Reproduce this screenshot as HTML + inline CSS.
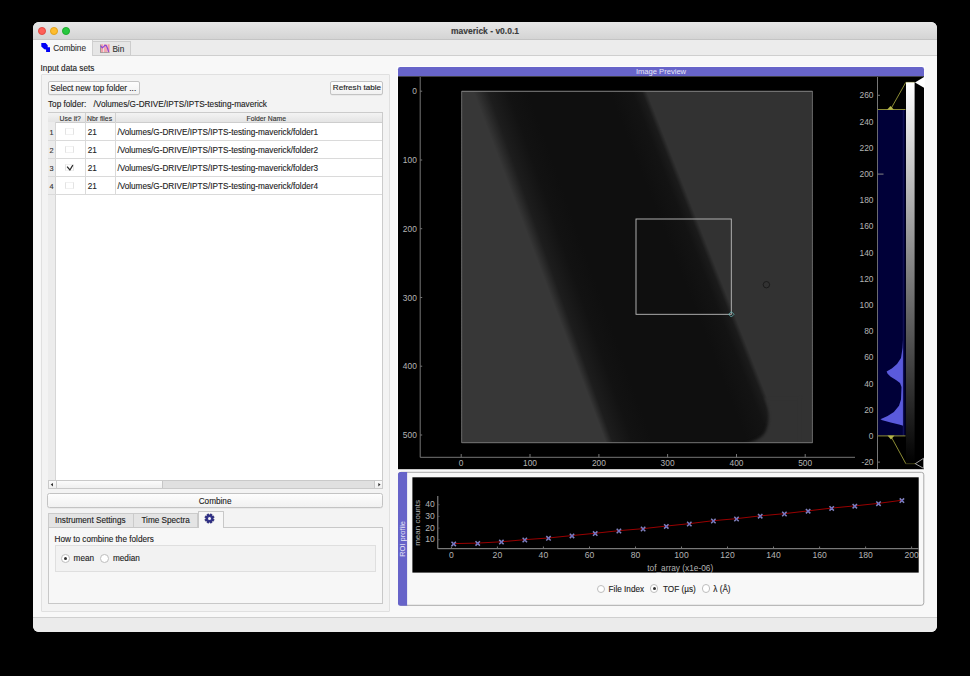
<!DOCTYPE html>
<html><head><meta charset="utf-8">
<style>
*{margin:0;padding:0;box-sizing:border-box}
html,body{width:970px;height:676px;background:#000;overflow:hidden}
body{position:relative;font-family:"Liberation Sans",sans-serif;color:#222;font-size:8.2px}
.a{position:absolute}
.t{position:absolute;white-space:nowrap;line-height:1;margin-top:1px;-webkit-text-stroke:0.12px currentColor}
#win{left:33px;top:22px;width:904px;height:610px;background:#f8f8f8;border-radius:6px;overflow:hidden}
#title{left:0;top:0;width:904px;height:18px;background:linear-gradient(#e7e7e7,#d4d4d4);border-bottom:1px solid #c4c4c4}
.tl{position:absolute;top:5.4px;width:7.8px;height:7.8px;border-radius:50%}
.btn{position:absolute;border:1px solid #c3c3c3;border-radius:2px;background:linear-gradient(#fdfdfd,#f1f1f1);box-shadow:0 0.5px 0.5px rgba(0,0,0,.08)}
.grp{position:absolute;border:1px solid #e0e0e0;background:#f3f3f3;border-radius:1px}
</style></head><body>
<div id="win" class="a">
  <div id="title" class="a"></div>
  <div class="tl" style="left:5.2px;background:#fe5f57;border:0.5px solid #e2463f"></div>
  <div class="tl" style="left:17.4px;background:#febc2e;border:0.5px solid #e1a116"></div>
  <div class="tl" style="left:29.4px;background:#28c840;border:0.5px solid #1aab29"></div>
  <div class="t" style="left:0;width:904px;text-align:center;top:4.4px;font-weight:bold;font-size:8.5px;color:#3b3b3b">maverick - v0.0.1</div>
  <!-- tab bar -->
  <div class="a" style="left:0;top:18px;width:904px;height:15.5px;background:#ececec;border-bottom:1px solid #cfcfcf"></div>
  <div class="a" style="left:0;top:18px;width:60px;height:16px;background:#f8f8f8;border-right:1px solid #d0d0d0"></div>
  <div class="a" style="left:60px;top:19px;width:37.5px;height:14.5px;background:#e6e6e6;border:1px solid #cdcdcd;border-left:0"></div>
  <!-- status bar -->
  <div class="a" style="left:0;top:595px;width:904px;height:15px;background:#ebebeb;border-top:1px solid #cfcfcf"></div>
</div>
<!-- Combine tab icon + text -->
<svg class="a" style="left:40px;top:42px" width="12" height="11" viewBox="0 0 12 11">
  <path d="M1.3 1 L5.6 1 L7.7 3.3 L7.7 5.3 L10 5.3 L10 9.9 L6.1 9.9 L6.1 7.5 L4.3 7.3 L1.3 4.5 Z" fill="#0000f5"/>
</svg>
<div class="t" style="left:53.2px;top:44.2px;color:#333">Combine</div>
<!-- Bin tab icon + text -->
<svg class="a" style="left:100px;top:43.5px" width="10.5" height="9.5" viewBox="0 0 10.5 9.5">
  <rect x="0.8" y="0.3" width="2.3" height="8.2" fill="#f2a3ad"/>
  <rect x="4" y="0.3" width="3.4" height="8.2" fill="#f2a8b0"/>
  <rect x="7.9" y="0.3" width="1.7" height="8.2" fill="#f39aa6"/>
  <path d="M0.5 0.5 V8.7 H9.6" fill="none" stroke="#6a6a6a" stroke-width="0.6"/>
  <polyline points="0.7,1.9 2.3,3.8 3.3,3.1 5.1,1.2 6.5,1.9 7.6,4.5 8.6,7.9" fill="none" stroke="#8b45d6" stroke-width="1.2" stroke-linejoin="round"/>
</svg>
<div class="t" style="left:112.4px;top:44.5px;color:#333">Bin</div>

<!-- Input data sets -->
<div class="t" style="left:40.6px;top:63.6px">Input data sets</div>
<div class="grp" style="left:41px;top:74px;width:348.5px;height:537.6px"></div>
<div class="btn" style="left:47.6px;top:80.5px;width:92px;height:14.3px"></div>
<div class="t" style="left:50.6px;top:83.5px">Select new top folder ...</div>
<div class="btn" style="left:330.4px;top:80.6px;width:52.9px;height:14px"></div>
<div class="t" style="left:332.8px;top:83.4px;font-size:8.1px">Refresh table</div>
<div class="t" style="left:48px;top:100.2px">Top folder:</div>
<div class="t" style="left:93.6px;top:100.2px">/Volumes/G-DRIVE/IPTS/IPTS-testing-maverick</div>


<!-- table -->
<div class="a" style="left:47.5px;top:112.3px;width:335.5px;height:376.7px;background:#fff;border:1px solid #cbcbcb"></div>
<div class="a" style="left:48.2px;top:112.8px;width:334.3px;height:9.8px;background:linear-gradient(#f3f3f3,#e4e4e4);border-bottom:1px solid #cdcdcd"></div>
<div class="a" style="left:48.2px;top:122.4px;width:7.4px;height:358px;background:#ececec;border-right:1px solid #d6d6d6"></div>
<div class="a" style="left:85px;top:112.8px;width:1px;height:9.6px;background:#d0d0d0"></div>
<div class="a" style="left:115.3px;top:112.8px;width:1px;height:9.6px;background:#d0d0d0"></div>
<div class="t" style="left:59.6px;top:114.2px;font-size:6.85px;color:#333;margin-top:1.6px">Use it?</div>
<div class="t" style="left:87px;top:114.2px;font-size:6.85px;color:#333;margin-top:1.6px">Nbr files</div>
<div class="t" style="left:246.5px;top:114.2px;font-size:6.85px;color:#333;margin-top:1.6px">Folder Name</div>
<div class="a" style="left:48.2px;top:139.8px;width:334.3px;height:1px;background:#dadada"></div>
<div class="a" style="left:85px;top:122.4px;width:1px;height:18px;background:#dadada"></div>
<div class="a" style="left:115.3px;top:122.4px;width:1px;height:18px;background:#dadada"></div>
<div class="t" style="left:49.4px;top:128.0px;font-size:7.3px;color:#333">1</div>
<div class="a" style="left:64.9px;top:128.2px;width:9.2px;height:6.8px;border:1px solid #e3e3e3;border-top-color:#f1f1f1;border-bottom-color:#f1f1f1"></div>
<div class="t" style="left:87.7px;top:128.3px">21</div>
<div class="t" style="left:117.4px;top:128.3px">/Volumes/G-DRIVE/IPTS/IPTS-testing-maverick/folder1</div>
<div class="a" style="left:48.2px;top:157.8px;width:334.3px;height:1px;background:#dadada"></div>
<div class="a" style="left:85px;top:140.4px;width:1px;height:18px;background:#dadada"></div>
<div class="a" style="left:115.3px;top:140.4px;width:1px;height:18px;background:#dadada"></div>
<div class="t" style="left:49.4px;top:146.0px;font-size:7.3px;color:#333">2</div>
<div class="a" style="left:64.9px;top:146.2px;width:9.2px;height:6.8px;border:1px solid #e3e3e3;border-top-color:#f1f1f1;border-bottom-color:#f1f1f1"></div>
<div class="t" style="left:87.7px;top:146.3px">21</div>
<div class="t" style="left:117.4px;top:146.3px">/Volumes/G-DRIVE/IPTS/IPTS-testing-maverick/folder2</div>
<div class="a" style="left:48.2px;top:175.8px;width:334.3px;height:1px;background:#dadada"></div>
<div class="a" style="left:85px;top:158.4px;width:1px;height:18px;background:#dadada"></div>
<div class="a" style="left:115.3px;top:158.4px;width:1px;height:18px;background:#dadada"></div>
<div class="t" style="left:49.4px;top:164.0px;font-size:7.3px;color:#333">3</div>
<div class="a" style="left:64.9px;top:164.2px;width:9.2px;height:6.8px;border:1px solid #e3e3e3;border-top-color:#f1f1f1;border-bottom-color:#f1f1f1"></div>
<svg class="a" style="left:65px;top:163.4px" width="10" height="9"><path d="M2.1 3.6 L4.9 7 L7.8 2.1" fill="none" stroke="#2a2a2a" stroke-width="1.2"/></svg>
<div class="t" style="left:87.7px;top:164.3px">21</div>
<div class="t" style="left:117.4px;top:164.3px">/Volumes/G-DRIVE/IPTS/IPTS-testing-maverick/folder3</div>
<div class="a" style="left:48.2px;top:193.8px;width:334.3px;height:1px;background:#dadada"></div>
<div class="a" style="left:85px;top:176.4px;width:1px;height:18px;background:#dadada"></div>
<div class="a" style="left:115.3px;top:176.4px;width:1px;height:18px;background:#dadada"></div>
<div class="t" style="left:49.4px;top:182.0px;font-size:7.3px;color:#333">4</div>
<div class="a" style="left:64.9px;top:182.2px;width:9.2px;height:6.8px;border:1px solid #e3e3e3;border-top-color:#f1f1f1;border-bottom-color:#f1f1f1"></div>
<div class="t" style="left:87.7px;top:182.3px">21</div>
<div class="t" style="left:117.4px;top:182.3px">/Volumes/G-DRIVE/IPTS/IPTS-testing-maverick/folder4</div>

<!-- scrollbar -->
<div class="a" style="left:47.5px;top:480.1px;width:335.5px;height:9.2px;background:#e0e0e0;border:1px solid #c9c9c9;border-radius:0 0 2px 2px"></div>
<div class="a" style="left:56.4px;top:481px;width:106.2px;height:7.4px;background:linear-gradient(#fbfbfb,#efefef);border-right:1px solid #c6c6c6"></div>
<div class="a" style="left:48.5px;top:481px;width:8px;height:7.4px;background:linear-gradient(#fbfbfb,#eeeeee);border-right:1px solid #c9c9c9"></div>
<div class="a" style="left:374.3px;top:481px;width:7.8px;height:7.4px;background:linear-gradient(#fbfbfb,#eeeeee);border-left:1px solid #c9c9c9"></div>
<svg class="a" style="left:50px;top:482px" width="5" height="6"><path d="M0.7 2.6 L3 0.9 V4.5 Z" fill="#333"/></svg>
<svg class="a" style="left:376.5px;top:482px" width="5" height="6"><path d="M3.6 2.6 L1.3 0.9 V4.5 Z" fill="#333"/></svg>
<!-- combine button -->
<div class="btn" style="left:47.3px;top:493.1px;width:335.7px;height:14.6px;border-radius:2.5px"></div>
<div class="t" style="left:47.7px;width:334.8px;text-align:center;top:496.6px">Combine</div>
<!-- tabs -->
<div class="a" style="left:48px;top:512.5px;width:85.7px;height:14.5px;background:#e4e4e4;border:1px solid #cbcbcb;border-bottom:0"></div>
<div class="t" style="left:55px;top:516px">Instrument Settings</div>
<div class="a" style="left:133.7px;top:512.5px;width:64.1px;height:14.5px;background:#e4e4e4;border:1px solid #cbcbcb;border-bottom:0;border-left:0"></div>
<div class="t" style="left:141.4px;top:516px">Time Spectra</div>
<div class="a" style="left:47.6px;top:526.8px;width:335.4px;height:77px;background:#f7f7f7;border:1px solid #c8c8c8"></div>
<div class="a" style="left:197.8px;top:511.4px;width:26px;height:16.2px;background:#f7f7f7;border:1px solid #c8c8c8;border-bottom:0;border-radius:1px 1px 0 0"></div>
<svg class="a" style="left:204.2px;top:513.4px" width="11" height="11" viewBox="-5.5 -5.5 11 11">
  <g fill="#34348f" stroke="#23235a" stroke-width="0.3"><rect x="-1.1" y="-4.8" width="2.2" height="2" rx="0.4" transform="rotate(22.5)"/><rect x="-1.1" y="-4.8" width="2.2" height="2" rx="0.4" transform="rotate(67.5)"/><rect x="-1.1" y="-4.8" width="2.2" height="2" rx="0.4" transform="rotate(112.5)"/><rect x="-1.1" y="-4.8" width="2.2" height="2" rx="0.4" transform="rotate(157.5)"/><rect x="-1.1" y="-4.8" width="2.2" height="2" rx="0.4" transform="rotate(202.5)"/><rect x="-1.1" y="-4.8" width="2.2" height="2" rx="0.4" transform="rotate(247.5)"/><rect x="-1.1" y="-4.8" width="2.2" height="2" rx="0.4" transform="rotate(292.5)"/><rect x="-1.1" y="-4.8" width="2.2" height="2" rx="0.4" transform="rotate(337.5)"/><circle r="3.5"/></g>
  <circle r="1.5" fill="#f7f7f7"/>
</svg>
<div class="t" style="left:54.6px;top:535px">How to combine the folders</div>
<div class="a" style="left:55px;top:545px;width:321.3px;height:27.4px;background:#f2f2f2;border:1px solid #dfdfdf"></div>
<div class="a" style="left:61px;top:554.3px;width:8.8px;height:8.8px;border-radius:50%;background:#fff;border:1px solid #bdbdbd"></div>
<div class="a" style="left:63.6px;top:556.9px;width:3.6px;height:3.6px;border-radius:50%;background:#333"></div>
<div class="t" style="left:73.6px;top:554.3px">mean</div>
<div class="a" style="left:100.1px;top:554.3px;width:8.8px;height:8.8px;border-radius:50%;background:#fff;border:1px solid #bdbdbd"></div>
<div class="t" style="left:113px;top:554.3px">median</div>
<!-- RIGHT -->
<svg class="a" style="left:0;top:0" width="970" height="676" viewBox="0 0 970 676" font-family="Liberation Sans, sans-serif">
<defs>
<clipPath id="imgclip"><rect x="461.3" y="90.9" width="351.5" height="352.2"/></clipPath>
<linearGradient id="cbar" x1="0" y1="0" x2="0" y2="1"><stop offset="0" stop-color="#fff"/><stop offset="1" stop-color="#000"/></linearGradient>
<linearGradient id="band" gradientUnits="userSpaceOnUse" x1="514.54" y1="284.53" x2="738.14" y2="197.33"><stop offset="0.0000" stop-color="#343434"/><stop offset="0.1000" stop-color="#343434"/><stop offset="0.1500" stop-color="#262626"/><stop offset="0.2167" stop-color="#141414"/><stop offset="0.2750" stop-color="#0f0f0f"/><stop offset="0.6875" stop-color="#0f0f0f"/><stop offset="0.7625" stop-color="#131313"/><stop offset="0.7833" stop-color="#1c1c1c"/><stop offset="0.8000" stop-color="#2a2a2a"/><stop offset="0.8167" stop-color="#303030"/><stop offset="1.0000" stop-color="#303030"/></linearGradient>
<filter id="blur1" x="-50%" y="-50%" width="200%" height="200%" color-interpolation-filters="sRGB"><feGaussianBlur stdDeviation="1.5"/></filter>
<filter id="blur2" x="-50%" y="-50%" width="200%" height="200%" color-interpolation-filters="sRGB"><feGaussianBlur stdDeviation="4"/></filter>
</defs>
<rect x="397" y="66" width="528" height="404" fill="#fdfdfd"/>
<path d="M398 69.2 Q398 67.1 400.1 67.1 H921.9 Q924 67.1 924 69.2 V76.3 H398 Z" fill="#6764c9"/>
<text x="661" y="74.2" text-anchor="middle" font-size="7.6" fill="#e6e6f7">Image Preview</text>
<rect x="398" y="76.3" width="526" height="392.9" fill="#000"/>
<g clip-path="url(#imgclip)">
<defs><linearGradient id="s0" gradientUnits="userSpaceOnUse" x1="461.3" y1="0" x2="812.8" y2="0" gradientTransform="translate(0 91.5) skewX(20.807) translate(0 -91.5)"><stop offset="0.0344" stop-color="#373737"/><stop offset="0.0770" stop-color="#1d1d1d"/><stop offset="0.1339" stop-color="#121212"/><stop offset="0.1908" stop-color="#0f0f0f"/><stop offset="0.4208" stop-color="#0f0f0f"/><stop offset="0.4862" stop-color="#131313"/><stop offset="0.5132" stop-color="#1b1b1b"/><stop offset="0.5274" stop-color="#323232"/></linearGradient><linearGradient id="s1" gradientUnits="userSpaceOnUse" x1="461.3" y1="0" x2="812.8" y2="0" gradientTransform="translate(0 94.5) skewX(20.807) translate(0 -94.5)"><stop offset="0.0376" stop-color="#373737"/><stop offset="0.0801" stop-color="#1d1d1d"/><stop offset="0.1370" stop-color="#121212"/><stop offset="0.1939" stop-color="#0f0f0f"/><stop offset="0.4241" stop-color="#0f0f0f"/><stop offset="0.4896" stop-color="#131313"/><stop offset="0.5166" stop-color="#1b1b1b"/><stop offset="0.5308" stop-color="#323232"/></linearGradient><linearGradient id="s2" gradientUnits="userSpaceOnUse" x1="461.3" y1="0" x2="812.8" y2="0" gradientTransform="translate(0 97.5) skewX(20.807) translate(0 -97.5)"><stop offset="0.0408" stop-color="#373737"/><stop offset="0.0831" stop-color="#1d1d1d"/><stop offset="0.1400" stop-color="#121212"/><stop offset="0.1969" stop-color="#0f0f0f"/><stop offset="0.4275" stop-color="#0f0f0f"/><stop offset="0.4929" stop-color="#131313"/><stop offset="0.5199" stop-color="#1b1b1b"/><stop offset="0.5342" stop-color="#323232"/></linearGradient><linearGradient id="s3" gradientUnits="userSpaceOnUse" x1="461.3" y1="0" x2="812.8" y2="0" gradientTransform="translate(0 100.5) skewX(20.807) translate(0 -100.5)"><stop offset="0.0441" stop-color="#373737"/><stop offset="0.0861" stop-color="#1d1d1d"/><stop offset="0.1430" stop-color="#121212"/><stop offset="0.1999" stop-color="#0f0f0f"/><stop offset="0.4308" stop-color="#0f0f0f"/><stop offset="0.4963" stop-color="#131313"/><stop offset="0.5233" stop-color="#1b1b1b"/><stop offset="0.5375" stop-color="#323232"/></linearGradient><linearGradient id="s4" gradientUnits="userSpaceOnUse" x1="461.3" y1="0" x2="812.8" y2="0" gradientTransform="translate(0 103.5) skewX(20.807) translate(0 -103.5)"><stop offset="0.0473" stop-color="#373737"/><stop offset="0.0891" stop-color="#1d1d1d"/><stop offset="0.1460" stop-color="#121212"/><stop offset="0.2029" stop-color="#0f0f0f"/><stop offset="0.4342" stop-color="#0f0f0f"/><stop offset="0.4996" stop-color="#131313"/><stop offset="0.5267" stop-color="#1b1b1b"/><stop offset="0.5409" stop-color="#323232"/></linearGradient><linearGradient id="s5" gradientUnits="userSpaceOnUse" x1="461.3" y1="0" x2="812.8" y2="0" gradientTransform="translate(0 106.5) skewX(20.807) translate(0 -106.5)"><stop offset="0.0505" stop-color="#373737"/><stop offset="0.0922" stop-color="#1d1d1d"/><stop offset="0.1491" stop-color="#121212"/><stop offset="0.2060" stop-color="#0f0f0f"/><stop offset="0.4376" stop-color="#0f0f0f"/><stop offset="0.5030" stop-color="#131313"/><stop offset="0.5300" stop-color="#1b1b1b"/><stop offset="0.5443" stop-color="#323232"/></linearGradient><linearGradient id="s6" gradientUnits="userSpaceOnUse" x1="461.3" y1="0" x2="812.8" y2="0" gradientTransform="translate(0 109.5) skewX(20.807) translate(0 -109.5)"><stop offset="0.0537" stop-color="#373737"/><stop offset="0.0952" stop-color="#1d1d1d"/><stop offset="0.1521" stop-color="#121212"/><stop offset="0.2090" stop-color="#0f0f0f"/><stop offset="0.4409" stop-color="#0f0f0f"/><stop offset="0.5064" stop-color="#131313"/><stop offset="0.5334" stop-color="#1b1b1b"/><stop offset="0.5476" stop-color="#323232"/></linearGradient><linearGradient id="s7" gradientUnits="userSpaceOnUse" x1="461.3" y1="0" x2="812.8" y2="0" gradientTransform="translate(0 112.5) skewX(20.807) translate(0 -112.5)"><stop offset="0.0569" stop-color="#373737"/><stop offset="0.0982" stop-color="#1d1d1d"/><stop offset="0.1551" stop-color="#121212"/><stop offset="0.2120" stop-color="#0f0f0f"/><stop offset="0.4443" stop-color="#0f0f0f"/><stop offset="0.5097" stop-color="#131313"/><stop offset="0.5368" stop-color="#1b1b1b"/><stop offset="0.5510" stop-color="#323232"/></linearGradient><linearGradient id="s8" gradientUnits="userSpaceOnUse" x1="461.3" y1="0" x2="812.8" y2="0" gradientTransform="translate(0 115.5) skewX(20.807) translate(0 -115.5)"><stop offset="0.0602" stop-color="#373737"/><stop offset="0.1012" stop-color="#1d1d1d"/><stop offset="0.1581" stop-color="#121212"/><stop offset="0.2150" stop-color="#0f0f0f"/><stop offset="0.4477" stop-color="#0f0f0f"/><stop offset="0.5131" stop-color="#131313"/><stop offset="0.5401" stop-color="#1b1b1b"/><stop offset="0.5543" stop-color="#323232"/></linearGradient><linearGradient id="s9" gradientUnits="userSpaceOnUse" x1="461.3" y1="0" x2="812.8" y2="0" gradientTransform="translate(0 118.5) skewX(20.807) translate(0 -118.5)"><stop offset="0.0634" stop-color="#373737"/><stop offset="0.1043" stop-color="#1d1d1d"/><stop offset="0.1612" stop-color="#121212"/><stop offset="0.2181" stop-color="#0f0f0f"/><stop offset="0.4510" stop-color="#0f0f0f"/><stop offset="0.5165" stop-color="#131313"/><stop offset="0.5435" stop-color="#1b1b1b"/><stop offset="0.5577" stop-color="#323232"/></linearGradient><linearGradient id="s10" gradientUnits="userSpaceOnUse" x1="461.3" y1="0" x2="812.8" y2="0" gradientTransform="translate(0 121.5) skewX(20.807) translate(0 -121.5)"><stop offset="0.0666" stop-color="#373737"/><stop offset="0.1073" stop-color="#1d1d1d"/><stop offset="0.1642" stop-color="#121212"/><stop offset="0.2211" stop-color="#0f0f0f"/><stop offset="0.4544" stop-color="#0f0f0f"/><stop offset="0.5198" stop-color="#131313"/><stop offset="0.5468" stop-color="#1b1b1b"/><stop offset="0.5611" stop-color="#323232"/></linearGradient><linearGradient id="s11" gradientUnits="userSpaceOnUse" x1="461.3" y1="0" x2="812.8" y2="0" gradientTransform="translate(0 124.5) skewX(20.807) translate(0 -124.5)"><stop offset="0.0698" stop-color="#373737"/><stop offset="0.1103" stop-color="#1d1d1d"/><stop offset="0.1672" stop-color="#121212"/><stop offset="0.2241" stop-color="#0f0f0f"/><stop offset="0.4577" stop-color="#0f0f0f"/><stop offset="0.5232" stop-color="#131313"/><stop offset="0.5502" stop-color="#1b1b1b"/><stop offset="0.5644" stop-color="#323232"/></linearGradient><linearGradient id="s12" gradientUnits="userSpaceOnUse" x1="461.3" y1="0" x2="812.8" y2="0" gradientTransform="translate(0 127.5) skewX(20.807) translate(0 -127.5)"><stop offset="0.0730" stop-color="#373737"/><stop offset="0.1134" stop-color="#1d1d1d"/><stop offset="0.1703" stop-color="#121212"/><stop offset="0.2272" stop-color="#0f0f0f"/><stop offset="0.4611" stop-color="#0f0f0f"/><stop offset="0.5265" stop-color="#131313"/><stop offset="0.5536" stop-color="#1b1b1b"/><stop offset="0.5678" stop-color="#323232"/></linearGradient><linearGradient id="s13" gradientUnits="userSpaceOnUse" x1="461.3" y1="0" x2="812.8" y2="0" gradientTransform="translate(0 130.5) skewX(20.807) translate(0 -130.5)"><stop offset="0.0763" stop-color="#373737"/><stop offset="0.1164" stop-color="#1d1d1d"/><stop offset="0.1733" stop-color="#121212"/><stop offset="0.2302" stop-color="#0f0f0f"/><stop offset="0.4645" stop-color="#0f0f0f"/><stop offset="0.5299" stop-color="#131313"/><stop offset="0.5569" stop-color="#1b1b1b"/><stop offset="0.5712" stop-color="#323232"/></linearGradient><linearGradient id="s14" gradientUnits="userSpaceOnUse" x1="461.3" y1="0" x2="812.8" y2="0" gradientTransform="translate(0 133.5) skewX(20.807) translate(0 -133.5)"><stop offset="0.0795" stop-color="#373737"/><stop offset="0.1194" stop-color="#1d1d1d"/><stop offset="0.1763" stop-color="#121212"/><stop offset="0.2332" stop-color="#0f0f0f"/><stop offset="0.4678" stop-color="#0f0f0f"/><stop offset="0.5333" stop-color="#131313"/><stop offset="0.5603" stop-color="#1b1b1b"/><stop offset="0.5745" stop-color="#323232"/></linearGradient><linearGradient id="s15" gradientUnits="userSpaceOnUse" x1="461.3" y1="0" x2="812.8" y2="0" gradientTransform="translate(0 136.5) skewX(20.807) translate(0 -136.5)"><stop offset="0.0827" stop-color="#373737"/><stop offset="0.1224" stop-color="#1d1d1d"/><stop offset="0.1793" stop-color="#121212"/><stop offset="0.2362" stop-color="#0f0f0f"/><stop offset="0.4712" stop-color="#0f0f0f"/><stop offset="0.5366" stop-color="#131313"/><stop offset="0.5637" stop-color="#1b1b1b"/><stop offset="0.5779" stop-color="#323232"/></linearGradient><linearGradient id="s16" gradientUnits="userSpaceOnUse" x1="461.3" y1="0" x2="812.8" y2="0" gradientTransform="translate(0 139.5) skewX(20.807) translate(0 -139.5)"><stop offset="0.0859" stop-color="#373737"/><stop offset="0.1255" stop-color="#1d1d1d"/><stop offset="0.1824" stop-color="#121212"/><stop offset="0.2393" stop-color="#0f0f0f"/><stop offset="0.4746" stop-color="#0f0f0f"/><stop offset="0.5400" stop-color="#131313"/><stop offset="0.5670" stop-color="#1b1b1b"/><stop offset="0.5812" stop-color="#323232"/></linearGradient><linearGradient id="s17" gradientUnits="userSpaceOnUse" x1="461.3" y1="0" x2="812.8" y2="0" gradientTransform="translate(0 142.5) skewX(20.807) translate(0 -142.5)"><stop offset="0.0891" stop-color="#373737"/><stop offset="0.1285" stop-color="#1d1d1d"/><stop offset="0.1854" stop-color="#121212"/><stop offset="0.2423" stop-color="#0f0f0f"/><stop offset="0.4779" stop-color="#0f0f0f"/><stop offset="0.5434" stop-color="#131313"/><stop offset="0.5704" stop-color="#1b1b1b"/><stop offset="0.5846" stop-color="#323232"/></linearGradient><linearGradient id="s18" gradientUnits="userSpaceOnUse" x1="461.3" y1="0" x2="812.8" y2="0" gradientTransform="translate(0 145.5) skewX(20.807) translate(0 -145.5)"><stop offset="0.0924" stop-color="#373737"/><stop offset="0.1315" stop-color="#1d1d1d"/><stop offset="0.1884" stop-color="#121212"/><stop offset="0.2453" stop-color="#0f0f0f"/><stop offset="0.4813" stop-color="#0f0f0f"/><stop offset="0.5467" stop-color="#131313"/><stop offset="0.5737" stop-color="#1b1b1b"/><stop offset="0.5880" stop-color="#323232"/></linearGradient><linearGradient id="s19" gradientUnits="userSpaceOnUse" x1="461.3" y1="0" x2="812.8" y2="0" gradientTransform="translate(0 148.5) skewX(20.807) translate(0 -148.5)"><stop offset="0.0956" stop-color="#373737"/><stop offset="0.1345" stop-color="#1d1d1d"/><stop offset="0.1914" stop-color="#121212"/><stop offset="0.2483" stop-color="#0f0f0f"/><stop offset="0.4847" stop-color="#0f0f0f"/><stop offset="0.5501" stop-color="#131313"/><stop offset="0.5771" stop-color="#1b1b1b"/><stop offset="0.5913" stop-color="#323232"/></linearGradient><linearGradient id="s20" gradientUnits="userSpaceOnUse" x1="461.3" y1="0" x2="812.8" y2="0" gradientTransform="translate(0 151.5) skewX(20.807) translate(0 -151.5)"><stop offset="0.0988" stop-color="#373737"/><stop offset="0.1376" stop-color="#1d1d1d"/><stop offset="0.1945" stop-color="#121212"/><stop offset="0.2514" stop-color="#0f0f0f"/><stop offset="0.4880" stop-color="#0f0f0f"/><stop offset="0.5534" stop-color="#131313"/><stop offset="0.5805" stop-color="#1b1b1b"/><stop offset="0.5947" stop-color="#323232"/></linearGradient><linearGradient id="s21" gradientUnits="userSpaceOnUse" x1="461.3" y1="0" x2="812.8" y2="0" gradientTransform="translate(0 154.5) skewX(20.807) translate(0 -154.5)"><stop offset="0.1020" stop-color="#373737"/><stop offset="0.1406" stop-color="#1d1d1d"/><stop offset="0.1975" stop-color="#121212"/><stop offset="0.2544" stop-color="#0f0f0f"/><stop offset="0.4914" stop-color="#0f0f0f"/><stop offset="0.5568" stop-color="#131313"/><stop offset="0.5838" stop-color="#1b1b1b"/><stop offset="0.5981" stop-color="#323232"/></linearGradient><linearGradient id="s22" gradientUnits="userSpaceOnUse" x1="461.3" y1="0" x2="812.8" y2="0" gradientTransform="translate(0 157.5) skewX(20.807) translate(0 -157.5)"><stop offset="0.1052" stop-color="#373737"/><stop offset="0.1436" stop-color="#1d1d1d"/><stop offset="0.2005" stop-color="#121212"/><stop offset="0.2574" stop-color="#0f0f0f"/><stop offset="0.4947" stop-color="#0f0f0f"/><stop offset="0.5602" stop-color="#131313"/><stop offset="0.5872" stop-color="#1b1b1b"/><stop offset="0.6014" stop-color="#323232"/></linearGradient><linearGradient id="s23" gradientUnits="userSpaceOnUse" x1="461.3" y1="0" x2="812.8" y2="0" gradientTransform="translate(0 160.5) skewX(20.807) translate(0 -160.5)"><stop offset="0.1085" stop-color="#373737"/><stop offset="0.1466" stop-color="#1d1d1d"/><stop offset="0.2035" stop-color="#121212"/><stop offset="0.2604" stop-color="#0f0f0f"/><stop offset="0.4981" stop-color="#0f0f0f"/><stop offset="0.5635" stop-color="#131313"/><stop offset="0.5906" stop-color="#1b1b1b"/><stop offset="0.6048" stop-color="#323232"/></linearGradient><linearGradient id="s24" gradientUnits="userSpaceOnUse" x1="461.3" y1="0" x2="812.8" y2="0" gradientTransform="translate(0 163.5) skewX(20.807) translate(0 -163.5)"><stop offset="0.1117" stop-color="#373737"/><stop offset="0.1497" stop-color="#1d1d1d"/><stop offset="0.2066" stop-color="#121212"/><stop offset="0.2635" stop-color="#0f0f0f"/><stop offset="0.5015" stop-color="#0f0f0f"/><stop offset="0.5669" stop-color="#131313"/><stop offset="0.5939" stop-color="#1b1b1b"/><stop offset="0.6082" stop-color="#323232"/></linearGradient><linearGradient id="s25" gradientUnits="userSpaceOnUse" x1="461.3" y1="0" x2="812.8" y2="0" gradientTransform="translate(0 166.5) skewX(20.807) translate(0 -166.5)"><stop offset="0.1149" stop-color="#373737"/><stop offset="0.1527" stop-color="#1d1d1d"/><stop offset="0.2096" stop-color="#121212"/><stop offset="0.2665" stop-color="#0f0f0f"/><stop offset="0.5048" stop-color="#0f0f0f"/><stop offset="0.5703" stop-color="#131313"/><stop offset="0.5973" stop-color="#1b1b1b"/><stop offset="0.6115" stop-color="#323232"/></linearGradient><linearGradient id="s26" gradientUnits="userSpaceOnUse" x1="461.3" y1="0" x2="812.8" y2="0" gradientTransform="translate(0 169.5) skewX(20.807) translate(0 -169.5)"><stop offset="0.1181" stop-color="#373737"/><stop offset="0.1557" stop-color="#1d1d1d"/><stop offset="0.2126" stop-color="#121212"/><stop offset="0.2695" stop-color="#0f0f0f"/><stop offset="0.5082" stop-color="#0f0f0f"/><stop offset="0.5736" stop-color="#131313"/><stop offset="0.6007" stop-color="#1b1b1b"/><stop offset="0.6149" stop-color="#323232"/></linearGradient><linearGradient id="s27" gradientUnits="userSpaceOnUse" x1="461.3" y1="0" x2="812.8" y2="0" gradientTransform="translate(0 172.5) skewX(20.807) translate(0 -172.5)"><stop offset="0.1214" stop-color="#373737"/><stop offset="0.1588" stop-color="#1d1d1d"/><stop offset="0.2157" stop-color="#121212"/><stop offset="0.2726" stop-color="#0f0f0f"/><stop offset="0.5116" stop-color="#0f0f0f"/><stop offset="0.5770" stop-color="#131313"/><stop offset="0.6040" stop-color="#1b1b1b"/><stop offset="0.6182" stop-color="#323232"/></linearGradient><linearGradient id="s28" gradientUnits="userSpaceOnUse" x1="461.3" y1="0" x2="812.8" y2="0" gradientTransform="translate(0 175.5) skewX(20.807) translate(0 -175.5)"><stop offset="0.1246" stop-color="#373737"/><stop offset="0.1618" stop-color="#1d1d1d"/><stop offset="0.2187" stop-color="#121212"/><stop offset="0.2756" stop-color="#0f0f0f"/><stop offset="0.5149" stop-color="#0f0f0f"/><stop offset="0.5803" stop-color="#131313"/><stop offset="0.6074" stop-color="#1b1b1b"/><stop offset="0.6216" stop-color="#323232"/></linearGradient><linearGradient id="s29" gradientUnits="userSpaceOnUse" x1="461.3" y1="0" x2="812.8" y2="0" gradientTransform="translate(0 178.5) skewX(20.807) translate(0 -178.5)"><stop offset="0.1278" stop-color="#373737"/><stop offset="0.1648" stop-color="#1d1d1d"/><stop offset="0.2217" stop-color="#121212"/><stop offset="0.2786" stop-color="#0f0f0f"/><stop offset="0.5183" stop-color="#0f0f0f"/><stop offset="0.5837" stop-color="#131313"/><stop offset="0.6107" stop-color="#1b1b1b"/><stop offset="0.6250" stop-color="#323232"/></linearGradient><linearGradient id="s30" gradientUnits="userSpaceOnUse" x1="461.3" y1="0" x2="812.8" y2="0" gradientTransform="translate(0 181.5) skewX(20.807) translate(0 -181.5)"><stop offset="0.1310" stop-color="#373737"/><stop offset="0.1678" stop-color="#1d1d1d"/><stop offset="0.2247" stop-color="#121212"/><stop offset="0.2816" stop-color="#0f0f0f"/><stop offset="0.5216" stop-color="#0f0f0f"/><stop offset="0.5871" stop-color="#131313"/><stop offset="0.6141" stop-color="#1b1b1b"/><stop offset="0.6283" stop-color="#323232"/></linearGradient><linearGradient id="s31" gradientUnits="userSpaceOnUse" x1="461.3" y1="0" x2="812.8" y2="0" gradientTransform="translate(0 184.5) skewX(20.807) translate(0 -184.5)"><stop offset="0.1342" stop-color="#373737"/><stop offset="0.1709" stop-color="#1d1d1d"/><stop offset="0.2278" stop-color="#121212"/><stop offset="0.2847" stop-color="#0f0f0f"/><stop offset="0.5250" stop-color="#0f0f0f"/><stop offset="0.5904" stop-color="#131313"/><stop offset="0.6175" stop-color="#1b1b1b"/><stop offset="0.6317" stop-color="#323232"/></linearGradient><linearGradient id="s32" gradientUnits="userSpaceOnUse" x1="461.3" y1="0" x2="812.8" y2="0" gradientTransform="translate(0 187.5) skewX(20.807) translate(0 -187.5)"><stop offset="0.1375" stop-color="#373737"/><stop offset="0.1739" stop-color="#1d1d1d"/><stop offset="0.2308" stop-color="#121212"/><stop offset="0.2877" stop-color="#0f0f0f"/><stop offset="0.5284" stop-color="#0f0f0f"/><stop offset="0.5938" stop-color="#131313"/><stop offset="0.6208" stop-color="#1b1b1b"/><stop offset="0.6351" stop-color="#323232"/></linearGradient><linearGradient id="s33" gradientUnits="userSpaceOnUse" x1="461.3" y1="0" x2="812.8" y2="0" gradientTransform="translate(0 190.5) skewX(20.807) translate(0 -190.5)"><stop offset="0.1407" stop-color="#373737"/><stop offset="0.1769" stop-color="#1d1d1d"/><stop offset="0.2338" stop-color="#121212"/><stop offset="0.2907" stop-color="#0f0f0f"/><stop offset="0.5317" stop-color="#0f0f0f"/><stop offset="0.5972" stop-color="#131313"/><stop offset="0.6242" stop-color="#1b1b1b"/><stop offset="0.6384" stop-color="#323232"/></linearGradient><linearGradient id="s34" gradientUnits="userSpaceOnUse" x1="461.3" y1="0" x2="812.8" y2="0" gradientTransform="translate(0 193.5) skewX(20.807) translate(0 -193.5)"><stop offset="0.1439" stop-color="#373737"/><stop offset="0.1799" stop-color="#1d1d1d"/><stop offset="0.2368" stop-color="#121212"/><stop offset="0.2937" stop-color="#0f0f0f"/><stop offset="0.5351" stop-color="#0f0f0f"/><stop offset="0.6005" stop-color="#131313"/><stop offset="0.6276" stop-color="#1b1b1b"/><stop offset="0.6418" stop-color="#323232"/></linearGradient><linearGradient id="s35" gradientUnits="userSpaceOnUse" x1="461.3" y1="0" x2="812.8" y2="0" gradientTransform="translate(0 196.5) skewX(20.807) translate(0 -196.5)"><stop offset="0.1471" stop-color="#373737"/><stop offset="0.1830" stop-color="#1d1d1d"/><stop offset="0.2399" stop-color="#121212"/><stop offset="0.2968" stop-color="#0f0f0f"/><stop offset="0.5385" stop-color="#0f0f0f"/><stop offset="0.6039" stop-color="#131313"/><stop offset="0.6309" stop-color="#1b1b1b"/><stop offset="0.6451" stop-color="#323232"/></linearGradient><linearGradient id="s36" gradientUnits="userSpaceOnUse" x1="461.3" y1="0" x2="812.8" y2="0" gradientTransform="translate(0 199.5) skewX(20.807) translate(0 -199.5)"><stop offset="0.1503" stop-color="#373737"/><stop offset="0.1860" stop-color="#1d1d1d"/><stop offset="0.2429" stop-color="#121212"/><stop offset="0.2998" stop-color="#0f0f0f"/><stop offset="0.5418" stop-color="#0f0f0f"/><stop offset="0.6073" stop-color="#131313"/><stop offset="0.6343" stop-color="#1b1b1b"/><stop offset="0.6485" stop-color="#323232"/></linearGradient><linearGradient id="s37" gradientUnits="userSpaceOnUse" x1="461.3" y1="0" x2="812.8" y2="0" gradientTransform="translate(0 202.5) skewX(20.807) translate(0 -202.5)"><stop offset="0.1536" stop-color="#373737"/><stop offset="0.1890" stop-color="#1d1d1d"/><stop offset="0.2459" stop-color="#121212"/><stop offset="0.3028" stop-color="#0f0f0f"/><stop offset="0.5452" stop-color="#0f0f0f"/><stop offset="0.6106" stop-color="#131313"/><stop offset="0.6376" stop-color="#1b1b1b"/><stop offset="0.6519" stop-color="#323232"/></linearGradient><linearGradient id="s38" gradientUnits="userSpaceOnUse" x1="461.3" y1="0" x2="812.8" y2="0" gradientTransform="translate(0 205.5) skewX(20.807) translate(0 -205.5)"><stop offset="0.1568" stop-color="#373737"/><stop offset="0.1921" stop-color="#1d1d1d"/><stop offset="0.2489" stop-color="#121212"/><stop offset="0.3058" stop-color="#0f0f0f"/><stop offset="0.5485" stop-color="#0f0f0f"/><stop offset="0.6140" stop-color="#131313"/><stop offset="0.6410" stop-color="#1b1b1b"/><stop offset="0.6552" stop-color="#323232"/></linearGradient><linearGradient id="s39" gradientUnits="userSpaceOnUse" x1="461.3" y1="0" x2="812.8" y2="0" gradientTransform="translate(0 208.5) skewX(20.807) translate(0 -208.5)"><stop offset="0.1600" stop-color="#373737"/><stop offset="0.1951" stop-color="#1d1d1d"/><stop offset="0.2520" stop-color="#121212"/><stop offset="0.3089" stop-color="#0f0f0f"/><stop offset="0.5519" stop-color="#0f0f0f"/><stop offset="0.6173" stop-color="#131313"/><stop offset="0.6444" stop-color="#1b1b1b"/><stop offset="0.6586" stop-color="#323232"/></linearGradient><linearGradient id="s40" gradientUnits="userSpaceOnUse" x1="461.3" y1="0" x2="812.8" y2="0" gradientTransform="translate(0 211.5) skewX(20.807) translate(0 -211.5)"><stop offset="0.1632" stop-color="#373737"/><stop offset="0.1981" stop-color="#1d1d1d"/><stop offset="0.2550" stop-color="#121212"/><stop offset="0.3119" stop-color="#0f0f0f"/><stop offset="0.5553" stop-color="#0f0f0f"/><stop offset="0.6207" stop-color="#131313"/><stop offset="0.6477" stop-color="#1b1b1b"/><stop offset="0.6620" stop-color="#323232"/></linearGradient><linearGradient id="s41" gradientUnits="userSpaceOnUse" x1="461.3" y1="0" x2="812.8" y2="0" gradientTransform="translate(0 214.5) skewX(20.807) translate(0 -214.5)"><stop offset="0.1664" stop-color="#373737"/><stop offset="0.2011" stop-color="#1d1d1d"/><stop offset="0.2580" stop-color="#121212"/><stop offset="0.3149" stop-color="#0f0f0f"/><stop offset="0.5586" stop-color="#0f0f0f"/><stop offset="0.6241" stop-color="#131313"/><stop offset="0.6511" stop-color="#1b1b1b"/><stop offset="0.6653" stop-color="#323232"/></linearGradient><linearGradient id="s42" gradientUnits="userSpaceOnUse" x1="461.3" y1="0" x2="812.8" y2="0" gradientTransform="translate(0 217.5) skewX(20.807) translate(0 -217.5)"><stop offset="0.1697" stop-color="#373737"/><stop offset="0.2042" stop-color="#1d1d1d"/><stop offset="0.2611" stop-color="#121212"/><stop offset="0.3180" stop-color="#0f0f0f"/><stop offset="0.5620" stop-color="#0f0f0f"/><stop offset="0.6274" stop-color="#131313"/><stop offset="0.6545" stop-color="#1b1b1b"/><stop offset="0.6687" stop-color="#323232"/></linearGradient><linearGradient id="s43" gradientUnits="userSpaceOnUse" x1="461.3" y1="0" x2="812.8" y2="0" gradientTransform="translate(0 220.5) skewX(20.807) translate(0 -220.5)"><stop offset="0.1729" stop-color="#373737"/><stop offset="0.2072" stop-color="#1d1d1d"/><stop offset="0.2641" stop-color="#121212"/><stop offset="0.3210" stop-color="#0f0f0f"/><stop offset="0.5654" stop-color="#0f0f0f"/><stop offset="0.6308" stop-color="#131313"/><stop offset="0.6578" stop-color="#1b1b1b"/><stop offset="0.6720" stop-color="#323232"/></linearGradient><linearGradient id="s44" gradientUnits="userSpaceOnUse" x1="461.3" y1="0" x2="812.8" y2="0" gradientTransform="translate(0 223.5) skewX(20.807) translate(0 -223.5)"><stop offset="0.1761" stop-color="#373737"/><stop offset="0.2102" stop-color="#1d1d1d"/><stop offset="0.2671" stop-color="#121212"/><stop offset="0.3240" stop-color="#0f0f0f"/><stop offset="0.5687" stop-color="#0f0f0f"/><stop offset="0.6342" stop-color="#131313"/><stop offset="0.6612" stop-color="#1b1b1b"/><stop offset="0.6754" stop-color="#323232"/></linearGradient><linearGradient id="s45" gradientUnits="userSpaceOnUse" x1="461.3" y1="0" x2="812.8" y2="0" gradientTransform="translate(0 226.5) skewX(20.807) translate(0 -226.5)"><stop offset="0.1793" stop-color="#373737"/><stop offset="0.2132" stop-color="#1d1d1d"/><stop offset="0.2701" stop-color="#121212"/><stop offset="0.3270" stop-color="#0f0f0f"/><stop offset="0.5721" stop-color="#0f0f0f"/><stop offset="0.6375" stop-color="#131313"/><stop offset="0.6645" stop-color="#1b1b1b"/><stop offset="0.6788" stop-color="#323232"/></linearGradient><linearGradient id="s46" gradientUnits="userSpaceOnUse" x1="461.3" y1="0" x2="812.8" y2="0" gradientTransform="translate(0 229.5) skewX(20.807) translate(0 -229.5)"><stop offset="0.1825" stop-color="#373737"/><stop offset="0.2163" stop-color="#1d1d1d"/><stop offset="0.2732" stop-color="#121212"/><stop offset="0.3301" stop-color="#0f0f0f"/><stop offset="0.5754" stop-color="#0f0f0f"/><stop offset="0.6409" stop-color="#131313"/><stop offset="0.6679" stop-color="#1b1b1b"/><stop offset="0.6821" stop-color="#323232"/></linearGradient><linearGradient id="s47" gradientUnits="userSpaceOnUse" x1="461.3" y1="0" x2="812.8" y2="0" gradientTransform="translate(0 232.5) skewX(20.807) translate(0 -232.5)"><stop offset="0.1858" stop-color="#373737"/><stop offset="0.2193" stop-color="#1d1d1d"/><stop offset="0.2762" stop-color="#121212"/><stop offset="0.3331" stop-color="#0f0f0f"/><stop offset="0.5788" stop-color="#0f0f0f"/><stop offset="0.6442" stop-color="#131313"/><stop offset="0.6713" stop-color="#1b1b1b"/><stop offset="0.6855" stop-color="#323232"/></linearGradient><linearGradient id="s48" gradientUnits="userSpaceOnUse" x1="461.3" y1="0" x2="812.8" y2="0" gradientTransform="translate(0 235.5) skewX(20.807) translate(0 -235.5)"><stop offset="0.1890" stop-color="#373737"/><stop offset="0.2223" stop-color="#1d1d1d"/><stop offset="0.2792" stop-color="#121212"/><stop offset="0.3361" stop-color="#0f0f0f"/><stop offset="0.5822" stop-color="#0f0f0f"/><stop offset="0.6476" stop-color="#131313"/><stop offset="0.6746" stop-color="#1b1b1b"/><stop offset="0.6889" stop-color="#323232"/></linearGradient><linearGradient id="s49" gradientUnits="userSpaceOnUse" x1="461.3" y1="0" x2="812.8" y2="0" gradientTransform="translate(0 238.5) skewX(20.807) translate(0 -238.5)"><stop offset="0.1922" stop-color="#373737"/><stop offset="0.2253" stop-color="#1d1d1d"/><stop offset="0.2822" stop-color="#121212"/><stop offset="0.3391" stop-color="#0f0f0f"/><stop offset="0.5855" stop-color="#0f0f0f"/><stop offset="0.6510" stop-color="#131313"/><stop offset="0.6780" stop-color="#1b1b1b"/><stop offset="0.6922" stop-color="#323232"/></linearGradient><linearGradient id="s50" gradientUnits="userSpaceOnUse" x1="461.3" y1="0" x2="812.8" y2="0" gradientTransform="translate(0 241.5) skewX(20.807) translate(0 -241.5)"><stop offset="0.1954" stop-color="#373737"/><stop offset="0.2284" stop-color="#1d1d1d"/><stop offset="0.2853" stop-color="#121212"/><stop offset="0.3422" stop-color="#0f0f0f"/><stop offset="0.5889" stop-color="#0f0f0f"/><stop offset="0.6543" stop-color="#131313"/><stop offset="0.6814" stop-color="#1b1b1b"/><stop offset="0.6956" stop-color="#323232"/></linearGradient><linearGradient id="s51" gradientUnits="userSpaceOnUse" x1="461.3" y1="0" x2="812.8" y2="0" gradientTransform="translate(0 244.5) skewX(20.807) translate(0 -244.5)"><stop offset="0.1986" stop-color="#373737"/><stop offset="0.2314" stop-color="#1d1d1d"/><stop offset="0.2883" stop-color="#121212"/><stop offset="0.3452" stop-color="#0f0f0f"/><stop offset="0.5923" stop-color="#0f0f0f"/><stop offset="0.6577" stop-color="#131313"/><stop offset="0.6847" stop-color="#1b1b1b"/><stop offset="0.6989" stop-color="#323232"/></linearGradient><linearGradient id="s52" gradientUnits="userSpaceOnUse" x1="461.3" y1="0" x2="812.8" y2="0" gradientTransform="translate(0 247.5) skewX(20.807) translate(0 -247.5)"><stop offset="0.2019" stop-color="#373737"/><stop offset="0.2344" stop-color="#1d1d1d"/><stop offset="0.2913" stop-color="#121212"/><stop offset="0.3482" stop-color="#0f0f0f"/><stop offset="0.5956" stop-color="#0f0f0f"/><stop offset="0.6611" stop-color="#131313"/><stop offset="0.6881" stop-color="#1b1b1b"/><stop offset="0.7023" stop-color="#323232"/></linearGradient><linearGradient id="s53" gradientUnits="userSpaceOnUse" x1="461.3" y1="0" x2="812.8" y2="0" gradientTransform="translate(0 250.5) skewX(20.807) translate(0 -250.5)"><stop offset="0.2051" stop-color="#373737"/><stop offset="0.2375" stop-color="#1d1d1d"/><stop offset="0.2944" stop-color="#121212"/><stop offset="0.3513" stop-color="#0f0f0f"/><stop offset="0.5990" stop-color="#0f0f0f"/><stop offset="0.6644" stop-color="#131313"/><stop offset="0.6914" stop-color="#1b1b1b"/><stop offset="0.7057" stop-color="#323232"/></linearGradient><linearGradient id="s54" gradientUnits="userSpaceOnUse" x1="461.3" y1="0" x2="812.8" y2="0" gradientTransform="translate(0 253.5) skewX(20.807) translate(0 -253.5)"><stop offset="0.2083" stop-color="#373737"/><stop offset="0.2405" stop-color="#1d1d1d"/><stop offset="0.2974" stop-color="#121212"/><stop offset="0.3543" stop-color="#0f0f0f"/><stop offset="0.6023" stop-color="#0f0f0f"/><stop offset="0.6678" stop-color="#131313"/><stop offset="0.6948" stop-color="#1b1b1b"/><stop offset="0.7090" stop-color="#323232"/></linearGradient><linearGradient id="s55" gradientUnits="userSpaceOnUse" x1="461.3" y1="0" x2="812.8" y2="0" gradientTransform="translate(0 256.5) skewX(20.807) translate(0 -256.5)"><stop offset="0.2115" stop-color="#373737"/><stop offset="0.2435" stop-color="#1d1d1d"/><stop offset="0.3004" stop-color="#121212"/><stop offset="0.3573" stop-color="#0f0f0f"/><stop offset="0.6057" stop-color="#0f0f0f"/><stop offset="0.6711" stop-color="#131313"/><stop offset="0.6982" stop-color="#1b1b1b"/><stop offset="0.7124" stop-color="#323232"/></linearGradient><linearGradient id="s56" gradientUnits="userSpaceOnUse" x1="461.3" y1="0" x2="812.8" y2="0" gradientTransform="translate(0 259.5) skewX(20.807) translate(0 -259.5)"><stop offset="0.2148" stop-color="#373737"/><stop offset="0.2465" stop-color="#1d1d1d"/><stop offset="0.3034" stop-color="#121212"/><stop offset="0.3603" stop-color="#0f0f0f"/><stop offset="0.6091" stop-color="#0f0f0f"/><stop offset="0.6745" stop-color="#131313"/><stop offset="0.7015" stop-color="#1b1b1b"/><stop offset="0.7158" stop-color="#323232"/></linearGradient><linearGradient id="s57" gradientUnits="userSpaceOnUse" x1="461.3" y1="0" x2="812.8" y2="0" gradientTransform="translate(0 262.5) skewX(20.807) translate(0 -262.5)"><stop offset="0.2180" stop-color="#373737"/><stop offset="0.2496" stop-color="#1d1d1d"/><stop offset="0.3065" stop-color="#121212"/><stop offset="0.3634" stop-color="#0f0f0f"/><stop offset="0.6124" stop-color="#0f0f0f"/><stop offset="0.6779" stop-color="#131313"/><stop offset="0.7049" stop-color="#1b1b1b"/><stop offset="0.7191" stop-color="#323232"/></linearGradient><linearGradient id="s58" gradientUnits="userSpaceOnUse" x1="461.3" y1="0" x2="812.8" y2="0" gradientTransform="translate(0 265.5) skewX(20.807) translate(0 -265.5)"><stop offset="0.2212" stop-color="#373737"/><stop offset="0.2526" stop-color="#1d1d1d"/><stop offset="0.3095" stop-color="#121212"/><stop offset="0.3664" stop-color="#0f0f0f"/><stop offset="0.6158" stop-color="#0f0f0f"/><stop offset="0.6812" stop-color="#131313"/><stop offset="0.7083" stop-color="#1b1b1b"/><stop offset="0.7225" stop-color="#323232"/></linearGradient><linearGradient id="s59" gradientUnits="userSpaceOnUse" x1="461.3" y1="0" x2="812.8" y2="0" gradientTransform="translate(0 268.5) skewX(20.807) translate(0 -268.5)"><stop offset="0.2244" stop-color="#373737"/><stop offset="0.2556" stop-color="#1d1d1d"/><stop offset="0.3125" stop-color="#121212"/><stop offset="0.3694" stop-color="#0f0f0f"/><stop offset="0.6192" stop-color="#0f0f0f"/><stop offset="0.6846" stop-color="#131313"/><stop offset="0.7116" stop-color="#1b1b1b"/><stop offset="0.7258" stop-color="#323232"/></linearGradient><linearGradient id="s60" gradientUnits="userSpaceOnUse" x1="461.3" y1="0" x2="812.8" y2="0" gradientTransform="translate(0 271.5) skewX(20.807) translate(0 -271.5)"><stop offset="0.2276" stop-color="#373737"/><stop offset="0.2586" stop-color="#1d1d1d"/><stop offset="0.3155" stop-color="#121212"/><stop offset="0.3724" stop-color="#0f0f0f"/><stop offset="0.6225" stop-color="#0f0f0f"/><stop offset="0.6880" stop-color="#131313"/><stop offset="0.7150" stop-color="#1b1b1b"/><stop offset="0.7292" stop-color="#323232"/></linearGradient><linearGradient id="s61" gradientUnits="userSpaceOnUse" x1="461.3" y1="0" x2="812.8" y2="0" gradientTransform="translate(0 274.5) skewX(20.807) translate(0 -274.5)"><stop offset="0.2309" stop-color="#373737"/><stop offset="0.2617" stop-color="#1d1d1d"/><stop offset="0.3186" stop-color="#121212"/><stop offset="0.3755" stop-color="#0f0f0f"/><stop offset="0.6259" stop-color="#0f0f0f"/><stop offset="0.6913" stop-color="#131313"/><stop offset="0.7183" stop-color="#1b1b1b"/><stop offset="0.7326" stop-color="#323232"/></linearGradient><linearGradient id="s62" gradientUnits="userSpaceOnUse" x1="461.3" y1="0" x2="812.8" y2="0" gradientTransform="translate(0 277.5) skewX(20.807) translate(0 -277.5)"><stop offset="0.2341" stop-color="#373737"/><stop offset="0.2647" stop-color="#1d1d1d"/><stop offset="0.3216" stop-color="#121212"/><stop offset="0.3785" stop-color="#0f0f0f"/><stop offset="0.6292" stop-color="#0f0f0f"/><stop offset="0.6947" stop-color="#131313"/><stop offset="0.7217" stop-color="#1b1b1b"/><stop offset="0.7359" stop-color="#323232"/></linearGradient><linearGradient id="s63" gradientUnits="userSpaceOnUse" x1="461.3" y1="0" x2="812.8" y2="0" gradientTransform="translate(0 280.5) skewX(20.807) translate(0 -280.5)"><stop offset="0.2373" stop-color="#373737"/><stop offset="0.2677" stop-color="#1d1d1d"/><stop offset="0.3246" stop-color="#121212"/><stop offset="0.3815" stop-color="#0f0f0f"/><stop offset="0.6326" stop-color="#0f0f0f"/><stop offset="0.6980" stop-color="#131313"/><stop offset="0.7251" stop-color="#1b1b1b"/><stop offset="0.7393" stop-color="#323232"/></linearGradient><linearGradient id="s64" gradientUnits="userSpaceOnUse" x1="461.3" y1="0" x2="812.8" y2="0" gradientTransform="translate(0 283.5) skewX(20.807) translate(0 -283.5)"><stop offset="0.2405" stop-color="#373737"/><stop offset="0.2707" stop-color="#1d1d1d"/><stop offset="0.3276" stop-color="#121212"/><stop offset="0.3845" stop-color="#0f0f0f"/><stop offset="0.6360" stop-color="#0f0f0f"/><stop offset="0.7014" stop-color="#131313"/><stop offset="0.7284" stop-color="#1b1b1b"/><stop offset="0.7427" stop-color="#323232"/></linearGradient><linearGradient id="s65" gradientUnits="userSpaceOnUse" x1="461.3" y1="0" x2="812.8" y2="0" gradientTransform="translate(0 286.5) skewX(20.807) translate(0 -286.5)"><stop offset="0.2437" stop-color="#373737"/><stop offset="0.2738" stop-color="#1d1d1d"/><stop offset="0.3307" stop-color="#121212"/><stop offset="0.3876" stop-color="#0f0f0f"/><stop offset="0.6393" stop-color="#0f0f0f"/><stop offset="0.7048" stop-color="#131313"/><stop offset="0.7318" stop-color="#1b1b1b"/><stop offset="0.7460" stop-color="#323232"/></linearGradient><linearGradient id="s66" gradientUnits="userSpaceOnUse" x1="461.3" y1="0" x2="812.8" y2="0" gradientTransform="translate(0 289.5) skewX(20.807) translate(0 -289.5)"><stop offset="0.2470" stop-color="#373737"/><stop offset="0.2768" stop-color="#1d1d1d"/><stop offset="0.3337" stop-color="#121212"/><stop offset="0.3906" stop-color="#0f0f0f"/><stop offset="0.6427" stop-color="#0f0f0f"/><stop offset="0.7081" stop-color="#131313"/><stop offset="0.7352" stop-color="#1b1b1b"/><stop offset="0.7494" stop-color="#323232"/></linearGradient><linearGradient id="s67" gradientUnits="userSpaceOnUse" x1="461.3" y1="0" x2="812.8" y2="0" gradientTransform="translate(0 292.5) skewX(20.807) translate(0 -292.5)"><stop offset="0.2502" stop-color="#373737"/><stop offset="0.2798" stop-color="#1d1d1d"/><stop offset="0.3367" stop-color="#121212"/><stop offset="0.3936" stop-color="#0f0f0f"/><stop offset="0.6461" stop-color="#0f0f0f"/><stop offset="0.7115" stop-color="#131313"/><stop offset="0.7385" stop-color="#1b1b1b"/><stop offset="0.7527" stop-color="#323232"/></linearGradient><linearGradient id="s68" gradientUnits="userSpaceOnUse" x1="461.3" y1="0" x2="812.8" y2="0" gradientTransform="translate(0 295.5) skewX(20.807) translate(0 -295.5)"><stop offset="0.2534" stop-color="#373737"/><stop offset="0.2829" stop-color="#1d1d1d"/><stop offset="0.3398" stop-color="#121212"/><stop offset="0.3967" stop-color="#0f0f0f"/><stop offset="0.6494" stop-color="#0f0f0f"/><stop offset="0.7149" stop-color="#131313"/><stop offset="0.7419" stop-color="#1b1b1b"/><stop offset="0.7561" stop-color="#323232"/></linearGradient><linearGradient id="s69" gradientUnits="userSpaceOnUse" x1="461.3" y1="0" x2="812.8" y2="0" gradientTransform="translate(0 298.5) skewX(20.807) translate(0 -298.5)"><stop offset="0.2566" stop-color="#373737"/><stop offset="0.2859" stop-color="#1d1d1d"/><stop offset="0.3428" stop-color="#121212"/><stop offset="0.3997" stop-color="#0f0f0f"/><stop offset="0.6528" stop-color="#0f0f0f"/><stop offset="0.7182" stop-color="#131313"/><stop offset="0.7452" stop-color="#1b1b1b"/><stop offset="0.7595" stop-color="#323232"/></linearGradient><linearGradient id="s70" gradientUnits="userSpaceOnUse" x1="461.3" y1="0" x2="812.8" y2="0" gradientTransform="translate(0 301.5) skewX(20.807) translate(0 -301.5)"><stop offset="0.2598" stop-color="#373737"/><stop offset="0.2889" stop-color="#1d1d1d"/><stop offset="0.3458" stop-color="#121212"/><stop offset="0.4027" stop-color="#0f0f0f"/><stop offset="0.6562" stop-color="#0f0f0f"/><stop offset="0.7216" stop-color="#131313"/><stop offset="0.7486" stop-color="#1b1b1b"/><stop offset="0.7628" stop-color="#323232"/></linearGradient><linearGradient id="s71" gradientUnits="userSpaceOnUse" x1="461.3" y1="0" x2="812.8" y2="0" gradientTransform="translate(0 304.5) skewX(20.807) translate(0 -304.5)"><stop offset="0.2631" stop-color="#373737"/><stop offset="0.2919" stop-color="#1d1d1d"/><stop offset="0.3488" stop-color="#121212"/><stop offset="0.4057" stop-color="#0f0f0f"/><stop offset="0.6595" stop-color="#0f0f0f"/><stop offset="0.7249" stop-color="#131313"/><stop offset="0.7520" stop-color="#1b1b1b"/><stop offset="0.7662" stop-color="#323232"/></linearGradient><linearGradient id="s72" gradientUnits="userSpaceOnUse" x1="461.3" y1="0" x2="812.8" y2="0" gradientTransform="translate(0 307.5) skewX(20.807) translate(0 -307.5)"><stop offset="0.2663" stop-color="#373737"/><stop offset="0.2950" stop-color="#1d1d1d"/><stop offset="0.3519" stop-color="#121212"/><stop offset="0.4088" stop-color="#0f0f0f"/><stop offset="0.6629" stop-color="#0f0f0f"/><stop offset="0.7283" stop-color="#131313"/><stop offset="0.7553" stop-color="#1b1b1b"/><stop offset="0.7696" stop-color="#323232"/></linearGradient><linearGradient id="s73" gradientUnits="userSpaceOnUse" x1="461.3" y1="0" x2="812.8" y2="0" gradientTransform="translate(0 310.5) skewX(20.807) translate(0 -310.5)"><stop offset="0.2695" stop-color="#373737"/><stop offset="0.2980" stop-color="#1d1d1d"/><stop offset="0.3549" stop-color="#121212"/><stop offset="0.4118" stop-color="#0f0f0f"/><stop offset="0.6662" stop-color="#0f0f0f"/><stop offset="0.7317" stop-color="#131313"/><stop offset="0.7587" stop-color="#1b1b1b"/><stop offset="0.7729" stop-color="#323232"/></linearGradient><linearGradient id="s74" gradientUnits="userSpaceOnUse" x1="461.3" y1="0" x2="812.8" y2="0" gradientTransform="translate(0 313.5) skewX(20.807) translate(0 -313.5)"><stop offset="0.2727" stop-color="#373737"/><stop offset="0.3010" stop-color="#1d1d1d"/><stop offset="0.3579" stop-color="#121212"/><stop offset="0.4148" stop-color="#0f0f0f"/><stop offset="0.6696" stop-color="#0f0f0f"/><stop offset="0.7350" stop-color="#131313"/><stop offset="0.7621" stop-color="#1b1b1b"/><stop offset="0.7763" stop-color="#323232"/></linearGradient><linearGradient id="s75" gradientUnits="userSpaceOnUse" x1="461.3" y1="0" x2="812.8" y2="0" gradientTransform="translate(0 316.5) skewX(20.807) translate(0 -316.5)"><stop offset="0.2759" stop-color="#373737"/><stop offset="0.3040" stop-color="#1d1d1d"/><stop offset="0.3609" stop-color="#121212"/><stop offset="0.4178" stop-color="#0f0f0f"/><stop offset="0.6730" stop-color="#0f0f0f"/><stop offset="0.7384" stop-color="#131313"/><stop offset="0.7654" stop-color="#1b1b1b"/><stop offset="0.7797" stop-color="#323232"/></linearGradient><linearGradient id="s76" gradientUnits="userSpaceOnUse" x1="461.3" y1="0" x2="812.8" y2="0" gradientTransform="translate(0 319.5) skewX(20.807) translate(0 -319.5)"><stop offset="0.2792" stop-color="#373737"/><stop offset="0.3071" stop-color="#1d1d1d"/><stop offset="0.3640" stop-color="#121212"/><stop offset="0.4209" stop-color="#0f0f0f"/><stop offset="0.6763" stop-color="#0f0f0f"/><stop offset="0.7418" stop-color="#131313"/><stop offset="0.7688" stop-color="#1b1b1b"/><stop offset="0.7830" stop-color="#323232"/></linearGradient><linearGradient id="s77" gradientUnits="userSpaceOnUse" x1="461.3" y1="0" x2="812.8" y2="0" gradientTransform="translate(0 322.5) skewX(20.807) translate(0 -322.5)"><stop offset="0.2824" stop-color="#373737"/><stop offset="0.3101" stop-color="#1d1d1d"/><stop offset="0.3670" stop-color="#121212"/><stop offset="0.4239" stop-color="#0f0f0f"/><stop offset="0.6797" stop-color="#0f0f0f"/><stop offset="0.7451" stop-color="#131313"/><stop offset="0.7722" stop-color="#1b1b1b"/><stop offset="0.7864" stop-color="#323232"/></linearGradient><linearGradient id="s78" gradientUnits="userSpaceOnUse" x1="461.3" y1="0" x2="812.8" y2="0" gradientTransform="translate(0 325.5) skewX(20.807) translate(0 -325.5)"><stop offset="0.2856" stop-color="#373737"/><stop offset="0.3131" stop-color="#1d1d1d"/><stop offset="0.3700" stop-color="#121212"/><stop offset="0.4269" stop-color="#0f0f0f"/><stop offset="0.6831" stop-color="#0f0f0f"/><stop offset="0.7485" stop-color="#131313"/><stop offset="0.7755" stop-color="#1b1b1b"/><stop offset="0.7897" stop-color="#323232"/></linearGradient><linearGradient id="s79" gradientUnits="userSpaceOnUse" x1="461.3" y1="0" x2="812.8" y2="0" gradientTransform="translate(0 328.5) skewX(20.807) translate(0 -328.5)"><stop offset="0.2888" stop-color="#373737"/><stop offset="0.3161" stop-color="#1d1d1d"/><stop offset="0.3730" stop-color="#121212"/><stop offset="0.4299" stop-color="#0f0f0f"/><stop offset="0.6864" stop-color="#0f0f0f"/><stop offset="0.7518" stop-color="#131313"/><stop offset="0.7789" stop-color="#1b1b1b"/><stop offset="0.7931" stop-color="#323232"/></linearGradient><linearGradient id="s80" gradientUnits="userSpaceOnUse" x1="461.3" y1="0" x2="812.8" y2="0" gradientTransform="translate(0 331.5) skewX(20.807) translate(0 -331.5)"><stop offset="0.2921" stop-color="#373737"/><stop offset="0.3192" stop-color="#1d1d1d"/><stop offset="0.3761" stop-color="#121212"/><stop offset="0.4330" stop-color="#0f0f0f"/><stop offset="0.6898" stop-color="#0f0f0f"/><stop offset="0.7552" stop-color="#131313"/><stop offset="0.7822" stop-color="#1b1b1b"/><stop offset="0.7965" stop-color="#323232"/></linearGradient><linearGradient id="s81" gradientUnits="userSpaceOnUse" x1="461.3" y1="0" x2="812.8" y2="0" gradientTransform="translate(0 334.5) skewX(20.807) translate(0 -334.5)"><stop offset="0.2953" stop-color="#373737"/><stop offset="0.3222" stop-color="#1d1d1d"/><stop offset="0.3791" stop-color="#121212"/><stop offset="0.4360" stop-color="#0f0f0f"/><stop offset="0.6931" stop-color="#0f0f0f"/><stop offset="0.7586" stop-color="#131313"/><stop offset="0.7856" stop-color="#1b1b1b"/><stop offset="0.7998" stop-color="#323232"/></linearGradient><linearGradient id="s82" gradientUnits="userSpaceOnUse" x1="461.3" y1="0" x2="812.8" y2="0" gradientTransform="translate(0 337.5) skewX(20.807) translate(0 -337.5)"><stop offset="0.2985" stop-color="#373737"/><stop offset="0.3252" stop-color="#1d1d1d"/><stop offset="0.3821" stop-color="#121212"/><stop offset="0.4390" stop-color="#0f0f0f"/><stop offset="0.6965" stop-color="#0f0f0f"/><stop offset="0.7619" stop-color="#131313"/><stop offset="0.7890" stop-color="#1b1b1b"/><stop offset="0.8032" stop-color="#323232"/></linearGradient><linearGradient id="s83" gradientUnits="userSpaceOnUse" x1="461.3" y1="0" x2="812.8" y2="0" gradientTransform="translate(0 340.5) skewX(20.807) translate(0 -340.5)"><stop offset="0.3017" stop-color="#373737"/><stop offset="0.3283" stop-color="#1d1d1d"/><stop offset="0.3852" stop-color="#121212"/><stop offset="0.4421" stop-color="#0f0f0f"/><stop offset="0.6999" stop-color="#0f0f0f"/><stop offset="0.7653" stop-color="#131313"/><stop offset="0.7923" stop-color="#1b1b1b"/><stop offset="0.8066" stop-color="#323232"/></linearGradient><linearGradient id="s84" gradientUnits="userSpaceOnUse" x1="461.3" y1="0" x2="812.8" y2="0" gradientTransform="translate(0 343.5) skewX(20.807) translate(0 -343.5)"><stop offset="0.3049" stop-color="#373737"/><stop offset="0.3313" stop-color="#1d1d1d"/><stop offset="0.3882" stop-color="#121212"/><stop offset="0.4451" stop-color="#0f0f0f"/><stop offset="0.7032" stop-color="#0f0f0f"/><stop offset="0.7687" stop-color="#131313"/><stop offset="0.7957" stop-color="#1b1b1b"/><stop offset="0.8099" stop-color="#323232"/></linearGradient><linearGradient id="s85" gradientUnits="userSpaceOnUse" x1="461.3" y1="0" x2="812.8" y2="0" gradientTransform="translate(0 346.5) skewX(20.807) translate(0 -346.5)"><stop offset="0.3082" stop-color="#373737"/><stop offset="0.3343" stop-color="#1d1d1d"/><stop offset="0.3912" stop-color="#121212"/><stop offset="0.4481" stop-color="#0f0f0f"/><stop offset="0.7066" stop-color="#0f0f0f"/><stop offset="0.7720" stop-color="#131313"/><stop offset="0.7991" stop-color="#1b1b1b"/><stop offset="0.8133" stop-color="#323232"/></linearGradient><linearGradient id="s86" gradientUnits="userSpaceOnUse" x1="461.3" y1="0" x2="812.8" y2="0" gradientTransform="translate(0 349.5) skewX(20.807) translate(0 -349.5)"><stop offset="0.3114" stop-color="#373737"/><stop offset="0.3373" stop-color="#1d1d1d"/><stop offset="0.3942" stop-color="#121212"/><stop offset="0.4511" stop-color="#0f0f0f"/><stop offset="0.7100" stop-color="#0f0f0f"/><stop offset="0.7754" stop-color="#131313"/><stop offset="0.8024" stop-color="#1b1b1b"/><stop offset="0.8166" stop-color="#323232"/></linearGradient><linearGradient id="s87" gradientUnits="userSpaceOnUse" x1="461.3" y1="0" x2="812.8" y2="0" gradientTransform="translate(0 352.5) skewX(20.807) translate(0 -352.5)"><stop offset="0.3146" stop-color="#373737"/><stop offset="0.3404" stop-color="#1d1d1d"/><stop offset="0.3973" stop-color="#121212"/><stop offset="0.4542" stop-color="#0f0f0f"/><stop offset="0.7133" stop-color="#0f0f0f"/><stop offset="0.7788" stop-color="#131313"/><stop offset="0.8058" stop-color="#1b1b1b"/><stop offset="0.8200" stop-color="#323232"/></linearGradient><linearGradient id="s88" gradientUnits="userSpaceOnUse" x1="461.3" y1="0" x2="812.8" y2="0" gradientTransform="translate(0 355.5) skewX(20.807) translate(0 -355.5)"><stop offset="0.3178" stop-color="#373737"/><stop offset="0.3434" stop-color="#1d1d1d"/><stop offset="0.4003" stop-color="#121212"/><stop offset="0.4572" stop-color="#0f0f0f"/><stop offset="0.7167" stop-color="#0f0f0f"/><stop offset="0.7821" stop-color="#131313"/><stop offset="0.8091" stop-color="#1b1b1b"/><stop offset="0.8234" stop-color="#323232"/></linearGradient><linearGradient id="s89" gradientUnits="userSpaceOnUse" x1="461.3" y1="0" x2="812.8" y2="0" gradientTransform="translate(0 358.5) skewX(20.807) translate(0 -358.5)"><stop offset="0.3210" stop-color="#373737"/><stop offset="0.3464" stop-color="#1d1d1d"/><stop offset="0.4033" stop-color="#121212"/><stop offset="0.4602" stop-color="#0f0f0f"/><stop offset="0.7200" stop-color="#0f0f0f"/><stop offset="0.7855" stop-color="#131313"/><stop offset="0.8125" stop-color="#1b1b1b"/><stop offset="0.8267" stop-color="#323232"/></linearGradient><linearGradient id="s90" gradientUnits="userSpaceOnUse" x1="461.3" y1="0" x2="812.8" y2="0" gradientTransform="translate(0 361.5) skewX(20.807) translate(0 -361.5)"><stop offset="0.3243" stop-color="#373737"/><stop offset="0.3494" stop-color="#1d1d1d"/><stop offset="0.4063" stop-color="#121212"/><stop offset="0.4632" stop-color="#0f0f0f"/><stop offset="0.7234" stop-color="#0f0f0f"/><stop offset="0.7888" stop-color="#131313"/><stop offset="0.8159" stop-color="#1b1b1b"/><stop offset="0.8301" stop-color="#323232"/></linearGradient><linearGradient id="s91" gradientUnits="userSpaceOnUse" x1="461.3" y1="0" x2="812.8" y2="0" gradientTransform="translate(0 364.5) skewX(20.807) translate(0 -364.5)"><stop offset="0.3275" stop-color="#373737"/><stop offset="0.3525" stop-color="#1d1d1d"/><stop offset="0.4094" stop-color="#121212"/><stop offset="0.4663" stop-color="#0f0f0f"/><stop offset="0.7268" stop-color="#0f0f0f"/><stop offset="0.7922" stop-color="#131313"/><stop offset="0.8192" stop-color="#1b1b1b"/><stop offset="0.8335" stop-color="#323232"/></linearGradient><linearGradient id="s92" gradientUnits="userSpaceOnUse" x1="461.3" y1="0" x2="812.8" y2="0" gradientTransform="translate(0 367.5) skewX(20.807) translate(0 -367.5)"><stop offset="0.3307" stop-color="#373737"/><stop offset="0.3555" stop-color="#1d1d1d"/><stop offset="0.4124" stop-color="#121212"/><stop offset="0.4693" stop-color="#0f0f0f"/><stop offset="0.7301" stop-color="#0f0f0f"/><stop offset="0.7956" stop-color="#131313"/><stop offset="0.8226" stop-color="#1b1b1b"/><stop offset="0.8368" stop-color="#323232"/></linearGradient><linearGradient id="s93" gradientUnits="userSpaceOnUse" x1="461.3" y1="0" x2="812.8" y2="0" gradientTransform="translate(0 370.5) skewX(20.807) translate(0 -370.5)"><stop offset="0.3339" stop-color="#373737"/><stop offset="0.3585" stop-color="#1d1d1d"/><stop offset="0.4154" stop-color="#121212"/><stop offset="0.4723" stop-color="#0f0f0f"/><stop offset="0.7335" stop-color="#0f0f0f"/><stop offset="0.7989" stop-color="#131313"/><stop offset="0.8260" stop-color="#1b1b1b"/><stop offset="0.8402" stop-color="#323232"/></linearGradient><linearGradient id="s94" gradientUnits="userSpaceOnUse" x1="461.3" y1="0" x2="812.8" y2="0" gradientTransform="translate(0 373.5) skewX(20.807) translate(0 -373.5)"><stop offset="0.3371" stop-color="#373737"/><stop offset="0.3615" stop-color="#1d1d1d"/><stop offset="0.4184" stop-color="#121212"/><stop offset="0.4753" stop-color="#0f0f0f"/><stop offset="0.7369" stop-color="#0f0f0f"/><stop offset="0.8023" stop-color="#131313"/><stop offset="0.8293" stop-color="#1b1b1b"/><stop offset="0.8435" stop-color="#323232"/></linearGradient><linearGradient id="s95" gradientUnits="userSpaceOnUse" x1="461.3" y1="0" x2="812.8" y2="0" gradientTransform="translate(0 376.5) skewX(20.807) translate(0 -376.5)"><stop offset="0.3404" stop-color="#373737"/><stop offset="0.3646" stop-color="#1d1d1d"/><stop offset="0.4215" stop-color="#121212"/><stop offset="0.4784" stop-color="#0f0f0f"/><stop offset="0.7402" stop-color="#0f0f0f"/><stop offset="0.8057" stop-color="#131313"/><stop offset="0.8327" stop-color="#1b1b1b"/><stop offset="0.8469" stop-color="#323232"/></linearGradient><linearGradient id="s96" gradientUnits="userSpaceOnUse" x1="461.3" y1="0" x2="812.8" y2="0" gradientTransform="translate(0 379.5) skewX(20.807) translate(0 -379.5)"><stop offset="0.3436" stop-color="#373737"/><stop offset="0.3676" stop-color="#1d1d1d"/><stop offset="0.4245" stop-color="#121212"/><stop offset="0.4814" stop-color="#0f0f0f"/><stop offset="0.7436" stop-color="#0f0f0f"/><stop offset="0.8090" stop-color="#131313"/><stop offset="0.8360" stop-color="#1b1b1b"/><stop offset="0.8503" stop-color="#323232"/></linearGradient><linearGradient id="s97" gradientUnits="userSpaceOnUse" x1="461.3" y1="0" x2="812.8" y2="0" gradientTransform="translate(0 382.5) skewX(20.807) translate(0 -382.5)"><stop offset="0.3468" stop-color="#373737"/><stop offset="0.3706" stop-color="#1d1d1d"/><stop offset="0.4275" stop-color="#121212"/><stop offset="0.4844" stop-color="#0f0f0f"/><stop offset="0.7469" stop-color="#0f0f0f"/><stop offset="0.8124" stop-color="#131313"/><stop offset="0.8394" stop-color="#1b1b1b"/><stop offset="0.8536" stop-color="#323232"/></linearGradient><linearGradient id="s98" gradientUnits="userSpaceOnUse" x1="461.3" y1="0" x2="812.8" y2="0" gradientTransform="translate(0 385.5) skewX(20.807) translate(0 -385.5)"><stop offset="0.3500" stop-color="#373737"/><stop offset="0.3737" stop-color="#1d1d1d"/><stop offset="0.4306" stop-color="#121212"/><stop offset="0.4875" stop-color="#0f0f0f"/><stop offset="0.7503" stop-color="#0f0f0f"/><stop offset="0.8157" stop-color="#131313"/><stop offset="0.8428" stop-color="#1b1b1b"/><stop offset="0.8570" stop-color="#323232"/></linearGradient><linearGradient id="s99" gradientUnits="userSpaceOnUse" x1="461.3" y1="0" x2="812.8" y2="0" gradientTransform="translate(0 388.5) skewX(20.807) translate(0 -388.5)"><stop offset="0.3532" stop-color="#373737"/><stop offset="0.3767" stop-color="#1d1d1d"/><stop offset="0.4336" stop-color="#121212"/><stop offset="0.4905" stop-color="#0f0f0f"/><stop offset="0.7537" stop-color="#0f0f0f"/><stop offset="0.8191" stop-color="#131313"/><stop offset="0.8461" stop-color="#1b1b1b"/><stop offset="0.8604" stop-color="#323232"/></linearGradient><linearGradient id="s100" gradientUnits="userSpaceOnUse" x1="461.3" y1="0" x2="812.8" y2="0" gradientTransform="translate(0 391.5) skewX(20.807) translate(0 -391.5)"><stop offset="0.3565" stop-color="#373737"/><stop offset="0.3797" stop-color="#1d1d1d"/><stop offset="0.4366" stop-color="#121212"/><stop offset="0.4935" stop-color="#0f0f0f"/><stop offset="0.7570" stop-color="#0f0f0f"/><stop offset="0.8225" stop-color="#131313"/><stop offset="0.8495" stop-color="#1b1b1b"/><stop offset="0.8637" stop-color="#323232"/></linearGradient><linearGradient id="s101" gradientUnits="userSpaceOnUse" x1="461.3" y1="0" x2="812.8" y2="0" gradientTransform="translate(0 394.5) skewX(20.807) translate(0 -394.5)"><stop offset="0.3597" stop-color="#373737"/><stop offset="0.3827" stop-color="#1d1d1d"/><stop offset="0.4396" stop-color="#121212"/><stop offset="0.4965" stop-color="#0f0f0f"/><stop offset="0.7604" stop-color="#0f0f0f"/><stop offset="0.8258" stop-color="#131313"/><stop offset="0.8529" stop-color="#1b1b1b"/><stop offset="0.8671" stop-color="#323232"/></linearGradient><linearGradient id="s102" gradientUnits="userSpaceOnUse" x1="461.3" y1="0" x2="812.8" y2="0" gradientTransform="translate(0 397.5) skewX(20.807) translate(0 -397.5)"><stop offset="0.3629" stop-color="#373737"/><stop offset="0.3858" stop-color="#1d1d1d"/><stop offset="0.4427" stop-color="#121212"/><stop offset="0.4996" stop-color="#0f0f0f"/><stop offset="0.7638" stop-color="#0f0f0f"/><stop offset="0.8292" stop-color="#131313"/><stop offset="0.8562" stop-color="#1b1b1b"/><stop offset="0.8704" stop-color="#323232"/></linearGradient><linearGradient id="s103" gradientUnits="userSpaceOnUse" x1="461.3" y1="0" x2="812.8" y2="0" gradientTransform="translate(0 400.5) skewX(20.807) translate(0 -400.5)"><stop offset="0.3661" stop-color="#373737"/><stop offset="0.3888" stop-color="#1d1d1d"/><stop offset="0.4457" stop-color="#121212"/><stop offset="0.5026" stop-color="#0f0f0f"/><stop offset="0.7671" stop-color="#0f0f0f"/><stop offset="0.8326" stop-color="#131313"/><stop offset="0.8596" stop-color="#1b1b1b"/><stop offset="0.8738" stop-color="#323232"/></linearGradient><linearGradient id="s104" gradientUnits="userSpaceOnUse" x1="461.3" y1="0" x2="812.8" y2="0" gradientTransform="translate(0 403.5) skewX(20.807) translate(0 -403.5)"><stop offset="0.3693" stop-color="#373737"/><stop offset="0.3918" stop-color="#1d1d1d"/><stop offset="0.4487" stop-color="#121212"/><stop offset="0.5056" stop-color="#0f0f0f"/><stop offset="0.7705" stop-color="#0f0f0f"/><stop offset="0.8359" stop-color="#131313"/><stop offset="0.8629" stop-color="#1b1b1b"/><stop offset="0.8772" stop-color="#323232"/></linearGradient><linearGradient id="s105" gradientUnits="userSpaceOnUse" x1="461.3" y1="0" x2="812.8" y2="0" gradientTransform="translate(0 406.5) skewX(20.807) translate(0 -406.5)"><stop offset="0.3726" stop-color="#373737"/><stop offset="0.3948" stop-color="#1d1d1d"/><stop offset="0.4517" stop-color="#121212"/><stop offset="0.5086" stop-color="#0f0f0f"/><stop offset="0.7738" stop-color="#0f0f0f"/><stop offset="0.8393" stop-color="#131313"/><stop offset="0.8663" stop-color="#1b1b1b"/><stop offset="0.8805" stop-color="#323232"/></linearGradient><linearGradient id="s106" gradientUnits="userSpaceOnUse" x1="461.3" y1="0" x2="812.8" y2="0" gradientTransform="translate(0 409.5) skewX(20.807) translate(0 -409.5)"><stop offset="0.3758" stop-color="#373737"/><stop offset="0.3979" stop-color="#1d1d1d"/><stop offset="0.4548" stop-color="#121212"/><stop offset="0.5117" stop-color="#0f0f0f"/><stop offset="0.7772" stop-color="#0f0f0f"/><stop offset="0.8426" stop-color="#131313"/><stop offset="0.8697" stop-color="#1b1b1b"/><stop offset="0.8839" stop-color="#323232"/></linearGradient><linearGradient id="s107" gradientUnits="userSpaceOnUse" x1="461.3" y1="0" x2="812.8" y2="0" gradientTransform="translate(0 412.5) skewX(20.807) translate(0 -412.5)"><stop offset="0.3790" stop-color="#373737"/><stop offset="0.4009" stop-color="#1d1d1d"/><stop offset="0.4578" stop-color="#121212"/><stop offset="0.5147" stop-color="#0f0f0f"/><stop offset="0.7806" stop-color="#0f0f0f"/><stop offset="0.8460" stop-color="#131313"/><stop offset="0.8730" stop-color="#1b1b1b"/><stop offset="0.8873" stop-color="#323232"/></linearGradient><linearGradient id="s108" gradientUnits="userSpaceOnUse" x1="461.3" y1="0" x2="812.8" y2="0" gradientTransform="translate(0 415.5) skewX(20.807) translate(0 -415.5)"><stop offset="0.3822" stop-color="#373737"/><stop offset="0.4039" stop-color="#1d1d1d"/><stop offset="0.4608" stop-color="#121212"/><stop offset="0.5177" stop-color="#0f0f0f"/><stop offset="0.7839" stop-color="#0f0f0f"/><stop offset="0.8494" stop-color="#131313"/><stop offset="0.8764" stop-color="#1b1b1b"/><stop offset="0.8906" stop-color="#323232"/></linearGradient><linearGradient id="s109" gradientUnits="userSpaceOnUse" x1="461.3" y1="0" x2="812.8" y2="0" gradientTransform="translate(0 418.5) skewX(20.807) translate(0 -418.5)"><stop offset="0.3855" stop-color="#373737"/><stop offset="0.4070" stop-color="#1d1d1d"/><stop offset="0.4639" stop-color="#121212"/><stop offset="0.5207" stop-color="#0f0f0f"/><stop offset="0.7873" stop-color="#0f0f0f"/><stop offset="0.8527" stop-color="#131313"/><stop offset="0.8798" stop-color="#1b1b1b"/><stop offset="0.8940" stop-color="#323232"/></linearGradient><linearGradient id="s110" gradientUnits="userSpaceOnUse" x1="461.3" y1="0" x2="812.8" y2="0" gradientTransform="translate(0 421.5) skewX(20.807) translate(0 -421.5)"><stop offset="0.3887" stop-color="#373737"/><stop offset="0.4100" stop-color="#1d1d1d"/><stop offset="0.4669" stop-color="#121212"/><stop offset="0.5238" stop-color="#0f0f0f"/><stop offset="0.7907" stop-color="#0f0f0f"/><stop offset="0.8561" stop-color="#131313"/><stop offset="0.8831" stop-color="#1b1b1b"/><stop offset="0.8973" stop-color="#323232"/></linearGradient><linearGradient id="s111" gradientUnits="userSpaceOnUse" x1="461.3" y1="0" x2="812.8" y2="0" gradientTransform="translate(0 424.5) skewX(20.807) translate(0 -424.5)"><stop offset="0.3919" stop-color="#373737"/><stop offset="0.4130" stop-color="#1d1d1d"/><stop offset="0.4699" stop-color="#121212"/><stop offset="0.5268" stop-color="#0f0f0f"/><stop offset="0.7940" stop-color="#0f0f0f"/><stop offset="0.8595" stop-color="#131313"/><stop offset="0.8865" stop-color="#1b1b1b"/><stop offset="0.9007" stop-color="#323232"/></linearGradient><linearGradient id="s112" gradientUnits="userSpaceOnUse" x1="461.3" y1="0" x2="812.8" y2="0" gradientTransform="translate(0 427.5) skewX(20.807) translate(0 -427.5)"><stop offset="0.3951" stop-color="#373737"/><stop offset="0.4160" stop-color="#1d1d1d"/><stop offset="0.4729" stop-color="#121212"/><stop offset="0.5298" stop-color="#0f0f0f"/><stop offset="0.7974" stop-color="#0f0f0f"/><stop offset="0.8628" stop-color="#131313"/><stop offset="0.8898" stop-color="#1b1b1b"/><stop offset="0.9041" stop-color="#323232"/></linearGradient><linearGradient id="s113" gradientUnits="userSpaceOnUse" x1="461.3" y1="0" x2="812.8" y2="0" gradientTransform="translate(0 430.5) skewX(20.807) translate(0 -430.5)"><stop offset="0.3983" stop-color="#373737"/><stop offset="0.4191" stop-color="#1d1d1d"/><stop offset="0.4760" stop-color="#121212"/><stop offset="0.5329" stop-color="#0f0f0f"/><stop offset="0.8007" stop-color="#0f0f0f"/><stop offset="0.8662" stop-color="#131313"/><stop offset="0.8932" stop-color="#1b1b1b"/><stop offset="0.9074" stop-color="#323232"/></linearGradient><linearGradient id="s114" gradientUnits="userSpaceOnUse" x1="461.3" y1="0" x2="812.8" y2="0" gradientTransform="translate(0 433.5) skewX(20.807) translate(0 -433.5)"><stop offset="0.4016" stop-color="#373737"/><stop offset="0.4221" stop-color="#1d1d1d"/><stop offset="0.4790" stop-color="#121212"/><stop offset="0.5359" stop-color="#0f0f0f"/><stop offset="0.8041" stop-color="#0f0f0f"/><stop offset="0.8695" stop-color="#131313"/><stop offset="0.8966" stop-color="#1b1b1b"/><stop offset="0.9108" stop-color="#323232"/></linearGradient><linearGradient id="s115" gradientUnits="userSpaceOnUse" x1="461.3" y1="0" x2="812.8" y2="0" gradientTransform="translate(0 436.5) skewX(20.807) translate(0 -436.5)"><stop offset="0.4048" stop-color="#373737"/><stop offset="0.4251" stop-color="#1d1d1d"/><stop offset="0.4820" stop-color="#121212"/><stop offset="0.5389" stop-color="#0f0f0f"/><stop offset="0.8075" stop-color="#0f0f0f"/><stop offset="0.8729" stop-color="#131313"/><stop offset="0.8999" stop-color="#1b1b1b"/><stop offset="0.9142" stop-color="#323232"/></linearGradient><linearGradient id="s116" gradientUnits="userSpaceOnUse" x1="461.3" y1="0" x2="812.8" y2="0" gradientTransform="translate(0 439.5) skewX(20.807) translate(0 -439.5)"><stop offset="0.4080" stop-color="#373737"/><stop offset="0.4281" stop-color="#1d1d1d"/><stop offset="0.4850" stop-color="#121212"/><stop offset="0.5419" stop-color="#0f0f0f"/><stop offset="0.8108" stop-color="#0f0f0f"/><stop offset="0.8763" stop-color="#131313"/><stop offset="0.9033" stop-color="#1b1b1b"/><stop offset="0.9175" stop-color="#323232"/></linearGradient><linearGradient id="s117" gradientUnits="userSpaceOnUse" x1="461.3" y1="0" x2="812.8" y2="0" gradientTransform="translate(0 442.5) skewX(20.807) translate(0 -442.5)"><stop offset="0.4112" stop-color="#373737"/><stop offset="0.4312" stop-color="#1d1d1d"/><stop offset="0.4881" stop-color="#121212"/><stop offset="0.5450" stop-color="#0f0f0f"/><stop offset="0.8142" stop-color="#0f0f0f"/><stop offset="0.8796" stop-color="#131313"/><stop offset="0.9067" stop-color="#1b1b1b"/><stop offset="0.9209" stop-color="#323232"/></linearGradient></defs>
<rect x="455" y="90" width="365" height="3.6" fill="url(#s0)"/>
<rect x="455" y="93" width="365" height="3.6" fill="url(#s1)"/>
<rect x="455" y="96" width="365" height="3.6" fill="url(#s2)"/>
<rect x="455" y="99" width="365" height="3.6" fill="url(#s3)"/>
<rect x="455" y="102" width="365" height="3.6" fill="url(#s4)"/>
<rect x="455" y="105" width="365" height="3.6" fill="url(#s5)"/>
<rect x="455" y="108" width="365" height="3.6" fill="url(#s6)"/>
<rect x="455" y="111" width="365" height="3.6" fill="url(#s7)"/>
<rect x="455" y="114" width="365" height="3.6" fill="url(#s8)"/>
<rect x="455" y="117" width="365" height="3.6" fill="url(#s9)"/>
<rect x="455" y="120" width="365" height="3.6" fill="url(#s10)"/>
<rect x="455" y="123" width="365" height="3.6" fill="url(#s11)"/>
<rect x="455" y="126" width="365" height="3.6" fill="url(#s12)"/>
<rect x="455" y="129" width="365" height="3.6" fill="url(#s13)"/>
<rect x="455" y="132" width="365" height="3.6" fill="url(#s14)"/>
<rect x="455" y="135" width="365" height="3.6" fill="url(#s15)"/>
<rect x="455" y="138" width="365" height="3.6" fill="url(#s16)"/>
<rect x="455" y="141" width="365" height="3.6" fill="url(#s17)"/>
<rect x="455" y="144" width="365" height="3.6" fill="url(#s18)"/>
<rect x="455" y="147" width="365" height="3.6" fill="url(#s19)"/>
<rect x="455" y="150" width="365" height="3.6" fill="url(#s20)"/>
<rect x="455" y="153" width="365" height="3.6" fill="url(#s21)"/>
<rect x="455" y="156" width="365" height="3.6" fill="url(#s22)"/>
<rect x="455" y="159" width="365" height="3.6" fill="url(#s23)"/>
<rect x="455" y="162" width="365" height="3.6" fill="url(#s24)"/>
<rect x="455" y="165" width="365" height="3.6" fill="url(#s25)"/>
<rect x="455" y="168" width="365" height="3.6" fill="url(#s26)"/>
<rect x="455" y="171" width="365" height="3.6" fill="url(#s27)"/>
<rect x="455" y="174" width="365" height="3.6" fill="url(#s28)"/>
<rect x="455" y="177" width="365" height="3.6" fill="url(#s29)"/>
<rect x="455" y="180" width="365" height="3.6" fill="url(#s30)"/>
<rect x="455" y="183" width="365" height="3.6" fill="url(#s31)"/>
<rect x="455" y="186" width="365" height="3.6" fill="url(#s32)"/>
<rect x="455" y="189" width="365" height="3.6" fill="url(#s33)"/>
<rect x="455" y="192" width="365" height="3.6" fill="url(#s34)"/>
<rect x="455" y="195" width="365" height="3.6" fill="url(#s35)"/>
<rect x="455" y="198" width="365" height="3.6" fill="url(#s36)"/>
<rect x="455" y="201" width="365" height="3.6" fill="url(#s37)"/>
<rect x="455" y="204" width="365" height="3.6" fill="url(#s38)"/>
<rect x="455" y="207" width="365" height="3.6" fill="url(#s39)"/>
<rect x="455" y="210" width="365" height="3.6" fill="url(#s40)"/>
<rect x="455" y="213" width="365" height="3.6" fill="url(#s41)"/>
<rect x="455" y="216" width="365" height="3.6" fill="url(#s42)"/>
<rect x="455" y="219" width="365" height="3.6" fill="url(#s43)"/>
<rect x="455" y="222" width="365" height="3.6" fill="url(#s44)"/>
<rect x="455" y="225" width="365" height="3.6" fill="url(#s45)"/>
<rect x="455" y="228" width="365" height="3.6" fill="url(#s46)"/>
<rect x="455" y="231" width="365" height="3.6" fill="url(#s47)"/>
<rect x="455" y="234" width="365" height="3.6" fill="url(#s48)"/>
<rect x="455" y="237" width="365" height="3.6" fill="url(#s49)"/>
<rect x="455" y="240" width="365" height="3.6" fill="url(#s50)"/>
<rect x="455" y="243" width="365" height="3.6" fill="url(#s51)"/>
<rect x="455" y="246" width="365" height="3.6" fill="url(#s52)"/>
<rect x="455" y="249" width="365" height="3.6" fill="url(#s53)"/>
<rect x="455" y="252" width="365" height="3.6" fill="url(#s54)"/>
<rect x="455" y="255" width="365" height="3.6" fill="url(#s55)"/>
<rect x="455" y="258" width="365" height="3.6" fill="url(#s56)"/>
<rect x="455" y="261" width="365" height="3.6" fill="url(#s57)"/>
<rect x="455" y="264" width="365" height="3.6" fill="url(#s58)"/>
<rect x="455" y="267" width="365" height="3.6" fill="url(#s59)"/>
<rect x="455" y="270" width="365" height="3.6" fill="url(#s60)"/>
<rect x="455" y="273" width="365" height="3.6" fill="url(#s61)"/>
<rect x="455" y="276" width="365" height="3.6" fill="url(#s62)"/>
<rect x="455" y="279" width="365" height="3.6" fill="url(#s63)"/>
<rect x="455" y="282" width="365" height="3.6" fill="url(#s64)"/>
<rect x="455" y="285" width="365" height="3.6" fill="url(#s65)"/>
<rect x="455" y="288" width="365" height="3.6" fill="url(#s66)"/>
<rect x="455" y="291" width="365" height="3.6" fill="url(#s67)"/>
<rect x="455" y="294" width="365" height="3.6" fill="url(#s68)"/>
<rect x="455" y="297" width="365" height="3.6" fill="url(#s69)"/>
<rect x="455" y="300" width="365" height="3.6" fill="url(#s70)"/>
<rect x="455" y="303" width="365" height="3.6" fill="url(#s71)"/>
<rect x="455" y="306" width="365" height="3.6" fill="url(#s72)"/>
<rect x="455" y="309" width="365" height="3.6" fill="url(#s73)"/>
<rect x="455" y="312" width="365" height="3.6" fill="url(#s74)"/>
<rect x="455" y="315" width="365" height="3.6" fill="url(#s75)"/>
<rect x="455" y="318" width="365" height="3.6" fill="url(#s76)"/>
<rect x="455" y="321" width="365" height="3.6" fill="url(#s77)"/>
<rect x="455" y="324" width="365" height="3.6" fill="url(#s78)"/>
<rect x="455" y="327" width="365" height="3.6" fill="url(#s79)"/>
<rect x="455" y="330" width="365" height="3.6" fill="url(#s80)"/>
<rect x="455" y="333" width="365" height="3.6" fill="url(#s81)"/>
<rect x="455" y="336" width="365" height="3.6" fill="url(#s82)"/>
<rect x="455" y="339" width="365" height="3.6" fill="url(#s83)"/>
<rect x="455" y="342" width="365" height="3.6" fill="url(#s84)"/>
<rect x="455" y="345" width="365" height="3.6" fill="url(#s85)"/>
<rect x="455" y="348" width="365" height="3.6" fill="url(#s86)"/>
<rect x="455" y="351" width="365" height="3.6" fill="url(#s87)"/>
<rect x="455" y="354" width="365" height="3.6" fill="url(#s88)"/>
<rect x="455" y="357" width="365" height="3.6" fill="url(#s89)"/>
<rect x="455" y="360" width="365" height="3.6" fill="url(#s90)"/>
<rect x="455" y="363" width="365" height="3.6" fill="url(#s91)"/>
<rect x="455" y="366" width="365" height="3.6" fill="url(#s92)"/>
<rect x="455" y="369" width="365" height="3.6" fill="url(#s93)"/>
<rect x="455" y="372" width="365" height="3.6" fill="url(#s94)"/>
<rect x="455" y="375" width="365" height="3.6" fill="url(#s95)"/>
<rect x="455" y="378" width="365" height="3.6" fill="url(#s96)"/>
<rect x="455" y="381" width="365" height="3.6" fill="url(#s97)"/>
<rect x="455" y="384" width="365" height="3.6" fill="url(#s98)"/>
<rect x="455" y="387" width="365" height="3.6" fill="url(#s99)"/>
<rect x="455" y="390" width="365" height="3.6" fill="url(#s100)"/>
<rect x="455" y="393" width="365" height="3.6" fill="url(#s101)"/>
<rect x="455" y="396" width="365" height="3.6" fill="url(#s102)"/>
<rect x="455" y="399" width="365" height="3.6" fill="url(#s103)"/>
<rect x="455" y="402" width="365" height="3.6" fill="url(#s104)"/>
<rect x="455" y="405" width="365" height="3.6" fill="url(#s105)"/>
<rect x="455" y="408" width="365" height="3.6" fill="url(#s106)"/>
<rect x="455" y="411" width="365" height="3.6" fill="url(#s107)"/>
<rect x="455" y="414" width="365" height="3.6" fill="url(#s108)"/>
<rect x="455" y="417" width="365" height="3.6" fill="url(#s109)"/>
<rect x="455" y="420" width="365" height="3.6" fill="url(#s110)"/>
<rect x="455" y="423" width="365" height="3.6" fill="url(#s111)"/>
<rect x="455" y="426" width="365" height="3.6" fill="url(#s112)"/>
<rect x="455" y="429" width="365" height="3.6" fill="url(#s113)"/>
<rect x="455" y="432" width="365" height="3.6" fill="url(#s114)"/>
<rect x="455" y="435" width="365" height="3.6" fill="url(#s115)"/>
<rect x="455" y="438" width="365" height="3.6" fill="url(#s116)"/>
<rect x="455" y="441" width="365" height="3.6" fill="url(#s117)"/>
<path d="M765 398 C770 410 770 426 764 434 C759 440 752 442 744 444 L800 446 L800 398 Z" fill="#323232" filter="url(#blur1)"/>
</g>
<path d="M461.7 442.7 V91.3 H812.4 V442.7 Z" fill="none" stroke="#767676" stroke-width="0.8"/>
<path d="M461.6 91.3 H812.5" fill="none" stroke="#9a9a9a" stroke-width="0.7" opacity="0.6"/>
<path d="M461.6 442.6 H813" fill="none" stroke="#707070" stroke-width="0.7" opacity="0.8"/>
<rect x="636" y="219" width="95.3" height="95.3" fill="none" stroke="#bdbdbd" stroke-width="0.9"/>
<path d="M731.3 311.6 L734 314.3 L731.3 317 L728.6 314.3 Z" fill="none" stroke="#5fb3b3" stroke-width="0.8"/>
<circle cx="766.4" cy="284.7" r="3.2" fill="none" stroke="#151515" stroke-width="0.8"/>
<path d="M420.2 77 V457.3 H855" fill="none" stroke="#767676" stroke-width="1"/>
<path d="M420.2 91.2 H422.2" stroke="#767676" stroke-width="1"/>
<text x="416.8" y="94.2" text-anchor="end" font-size="8.4" fill="#b4b4b4">0</text>
<path d="M420.2 160.0 H422.2" stroke="#767676" stroke-width="1"/>
<text x="416.8" y="163.0" text-anchor="end" font-size="8.4" fill="#b4b4b4">100</text>
<path d="M420.2 228.7 H422.2" stroke="#767676" stroke-width="1"/>
<text x="416.8" y="231.7" text-anchor="end" font-size="8.4" fill="#b4b4b4">200</text>
<path d="M420.2 297.5 H422.2" stroke="#767676" stroke-width="1"/>
<text x="416.8" y="300.5" text-anchor="end" font-size="8.4" fill="#b4b4b4">300</text>
<path d="M420.2 366.2 H422.2" stroke="#767676" stroke-width="1"/>
<text x="416.8" y="369.2" text-anchor="end" font-size="8.4" fill="#b4b4b4">400</text>
<path d="M420.2 435.0 H422.2" stroke="#767676" stroke-width="1"/>
<text x="416.8" y="438.0" text-anchor="end" font-size="8.4" fill="#b4b4b4">500</text>
<path d="M461.2 457.3 V454" stroke="#767676" stroke-width="1"/>
<text x="461.2" y="465.5" text-anchor="middle" font-size="8.4" fill="#b4b4b4">0</text>
<path d="M530.0 457.3 V454" stroke="#767676" stroke-width="1"/>
<text x="530.0" y="465.5" text-anchor="middle" font-size="8.4" fill="#b4b4b4">100</text>
<path d="M598.9 457.3 V454" stroke="#767676" stroke-width="1"/>
<text x="598.9" y="465.5" text-anchor="middle" font-size="8.4" fill="#b4b4b4">200</text>
<path d="M667.6 457.3 V454" stroke="#767676" stroke-width="1"/>
<text x="667.6" y="465.5" text-anchor="middle" font-size="8.4" fill="#b4b4b4">300</text>
<path d="M736.5 457.3 V454" stroke="#767676" stroke-width="1"/>
<text x="736.5" y="465.5" text-anchor="middle" font-size="8.4" fill="#b4b4b4">400</text>
<path d="M805.2 457.3 V454" stroke="#767676" stroke-width="1"/>
<text x="805.2" y="465.5" text-anchor="middle" font-size="8.4" fill="#b4b4b4">500</text>
<path d="M877.5 77 V469" stroke="#767676" stroke-width="1"/>
<path d="M877.5 462.1 H880" stroke="#767676" stroke-width="1"/>
<text x="873.5" y="465.1" text-anchor="end" font-size="8.4" fill="#b4b4b4">-20</text>
<text x="873.5" y="438.9" text-anchor="end" font-size="8.4" fill="#b4b4b4">0</text>
<text x="873.5" y="412.7" text-anchor="end" font-size="8.4" fill="#b4b4b4">20</text>
<text x="873.5" y="386.5" text-anchor="end" font-size="8.4" fill="#b4b4b4">40</text>
<text x="873.5" y="360.3" text-anchor="end" font-size="8.4" fill="#b4b4b4">60</text>
<text x="873.5" y="334.1" text-anchor="end" font-size="8.4" fill="#b4b4b4">80</text>
<text x="873.5" y="307.9" text-anchor="end" font-size="8.4" fill="#b4b4b4">100</text>
<text x="873.5" y="281.7" text-anchor="end" font-size="8.4" fill="#b4b4b4">120</text>
<text x="873.5" y="255.5" text-anchor="end" font-size="8.4" fill="#b4b4b4">140</text>
<text x="873.5" y="229.3" text-anchor="end" font-size="8.4" fill="#b4b4b4">160</text>
<text x="873.5" y="203.1" text-anchor="end" font-size="8.4" fill="#b4b4b4">180</text>
<text x="873.5" y="176.9" text-anchor="end" font-size="8.4" fill="#b4b4b4">200</text>
<text x="873.5" y="150.7" text-anchor="end" font-size="8.4" fill="#b4b4b4">220</text>
<text x="873.5" y="124.5" text-anchor="end" font-size="8.4" fill="#b4b4b4">240</text>
<path d="M877.5 95.3 H880" stroke="#767676" stroke-width="1"/>
<text x="873.5" y="98.3" text-anchor="end" font-size="8.4" fill="#b4b4b4">260</text>
<rect x="877.9" y="109.5" width="27.6" height="326.4" fill="#000038"/>
<path d="M903.0 340.0 L902.6 347.7 L901.0 358.0 L897.0 364.0 L891.8 368.5 L886.6 371.6 L887.6 373.7 L890.7 376.8 L896.0 380.0 L900.0 383.0 L901.5 387.0 L901.0 399.6 L899.0 405.8 L893.9 412.0 L887.6 416.0 L880.4 419.3 L882.4 420.3 L890.7 422.4 L899.0 424.5 L902.6 425.5 L903.0 426.0 Z" fill="#5a5adc"/>
<path d="M903.3 109.5 V435.9" stroke="#2a2a80" stroke-width="0.5"/>
<path d="M877.5 174.1 H883.5" stroke="#858585" stroke-width="1"/>
<path d="M877.9 109.5 H905.5 M890.5 109.5 L905.8 82.4 H914.6 M877.9 435.9 H905.5 M890.7 435.9 L905.8 463.6 H915.3" fill="none" stroke="#9c9c3a" stroke-width="0.9"/>
<path d="M887 109.8 L890.5 105.9 L894 109.8 Z" fill="#b5b54a"/>
<path d="M887.5 435.6 L891 439.6 L894.5 435.6 Z" fill="#b5b54a"/>
<rect x="906" y="82.4" width="8.6" height="381.2" fill="url(#cbar)"/>
<path d="M915 82.4 L924 77 V87.8 Z" fill="#fff"/>
<path d="M915.3 463.7 L923.5 458.3 V468.3 Z" fill="none" stroke="#c8c8c8" stroke-width="0.8"/>
<rect x="398.5" y="472.3" width="525.3" height="133" rx="2.5" fill="#f8f8f8" stroke="#a9a9a9" stroke-width="1"/>
<path d="M400.5 472 H407.1 V605.7 H400.5 Q398 605.7 398 603.2 V474.5 Q398 472 400.5 472 Z" fill="#6764c9"/>
<text transform="translate(405.0 538.9) rotate(-90)" text-anchor="middle" font-size="7.5" fill="#e6e6f7">ROI profile</text>
<rect x="412.4" y="477.3" width="506.3" height="95.3" fill="#000"/>
<path d="M437.8 496 V548.7 H918.5" fill="none" stroke="#959595" stroke-width="1"/>
<path d="M437.8 539.7 H439.6" stroke="#5a5a5a" stroke-width="0.8"/>
<text x="434.7" y="542.3" text-anchor="end" font-size="8.6" fill="#b4b4b4">10</text>
<path d="M437.8 528.1 H439.6" stroke="#5a5a5a" stroke-width="0.8"/>
<text x="434.7" y="530.7" text-anchor="end" font-size="8.6" fill="#b4b4b4">20</text>
<path d="M437.8 516.4 H439.6" stroke="#5a5a5a" stroke-width="0.8"/>
<text x="434.7" y="519.0" text-anchor="end" font-size="8.6" fill="#b4b4b4">30</text>
<path d="M437.8 504.7 H439.6" stroke="#5a5a5a" stroke-width="0.8"/>
<text x="434.7" y="507.3" text-anchor="end" font-size="8.6" fill="#b4b4b4">40</text>
<path d="M451.4 548.7 V546.5" stroke="#767676" stroke-width="1"/>
<text x="451.4" y="557.7" text-anchor="middle" font-size="8.6" fill="#b4b4b4">0</text>
<path d="M497.4 548.7 V546.5" stroke="#767676" stroke-width="1"/>
<text x="497.4" y="557.7" text-anchor="middle" font-size="8.6" fill="#b4b4b4">20</text>
<path d="M543.4 548.7 V546.5" stroke="#767676" stroke-width="1"/>
<text x="543.4" y="557.7" text-anchor="middle" font-size="8.6" fill="#b4b4b4">40</text>
<path d="M589.5 548.7 V546.5" stroke="#767676" stroke-width="1"/>
<text x="589.5" y="557.7" text-anchor="middle" font-size="8.6" fill="#b4b4b4">60</text>
<path d="M635.5 548.7 V546.5" stroke="#767676" stroke-width="1"/>
<text x="635.5" y="557.7" text-anchor="middle" font-size="8.6" fill="#b4b4b4">80</text>
<path d="M681.5 548.7 V546.5" stroke="#767676" stroke-width="1"/>
<text x="681.5" y="557.7" text-anchor="middle" font-size="8.6" fill="#b4b4b4">100</text>
<path d="M727.5 548.7 V546.5" stroke="#767676" stroke-width="1"/>
<text x="727.5" y="557.7" text-anchor="middle" font-size="8.6" fill="#b4b4b4">120</text>
<path d="M773.5 548.7 V546.5" stroke="#767676" stroke-width="1"/>
<text x="773.5" y="557.7" text-anchor="middle" font-size="8.6" fill="#b4b4b4">140</text>
<path d="M819.6 548.7 V546.5" stroke="#767676" stroke-width="1"/>
<text x="819.6" y="557.7" text-anchor="middle" font-size="8.6" fill="#b4b4b4">160</text>
<path d="M865.6 548.7 V546.5" stroke="#767676" stroke-width="1"/>
<text x="865.6" y="557.7" text-anchor="middle" font-size="8.6" fill="#b4b4b4">180</text>
<path d="M911.6 548.7 V546.5" stroke="#767676" stroke-width="1"/>
<text x="911.6" y="557.7" text-anchor="middle" font-size="8.6" fill="#b4b4b4">200</text>
<text transform="translate(420.2 522.9) rotate(-90)" text-anchor="middle" font-size="8.0" fill="#b4b4b4">mean counts</text>
<text x="680.2" y="570.8" text-anchor="middle" font-size="8.3" fill="#b4b4b4">tof_array (x1e-06)</text>
<path d="M453.4 543.6 L477.4 543.1 L501.1 541.8 L524.5 539.7 L548.2 538.0 L571.7 535.6 L594.9 533.3 L618.6 530.7 L642.8 528.7 L666.0 526.1 L689.0 523.7 L713.1 520.7 L736.2 518.7 L759.9 515.9 L784.1 513.7 L807.8 510.9 L831.4 508.1 L854.5 505.9 L878.2 503.4 L901.6 500.3" fill="none" stroke="#990000" stroke-width="1"/>
<path d="M451.5 541.7 L455.9 546.1 M455.9 541.7 L451.5 546.1" stroke="#8282c0" stroke-width="1.5"/>
<circle cx="453.7" cy="543.9" r="0.8" fill="#5a5ac8"/>
<path d="M475.5 541.2 L479.9 545.6 M479.9 541.2 L475.5 545.6" stroke="#8282c0" stroke-width="1.5"/>
<circle cx="477.7" cy="543.4" r="0.8" fill="#5a5ac8"/>
<path d="M499.2 539.9 L503.6 544.3 M503.6 539.9 L499.2 544.3" stroke="#8282c0" stroke-width="1.5"/>
<circle cx="501.4" cy="542.1" r="0.8" fill="#5a5ac8"/>
<path d="M522.6 537.8 L527.0 542.2 M527.0 537.8 L522.6 542.2" stroke="#8282c0" stroke-width="1.5"/>
<circle cx="524.8" cy="540.0" r="0.8" fill="#5a5ac8"/>
<path d="M546.3 536.1 L550.7 540.5 M550.7 536.1 L546.3 540.5" stroke="#8282c0" stroke-width="1.5"/>
<circle cx="548.5" cy="538.3" r="0.8" fill="#5a5ac8"/>
<path d="M569.8 533.7 L574.2 538.1 M574.2 533.7 L569.8 538.1" stroke="#8282c0" stroke-width="1.5"/>
<circle cx="572.0" cy="535.9" r="0.8" fill="#5a5ac8"/>
<path d="M593.0 531.4 L597.4 535.8 M597.4 531.4 L593.0 535.8" stroke="#8282c0" stroke-width="1.5"/>
<circle cx="595.2" cy="533.6" r="0.8" fill="#5a5ac8"/>
<path d="M616.7 528.8 L621.1 533.2 M621.1 528.8 L616.7 533.2" stroke="#8282c0" stroke-width="1.5"/>
<circle cx="618.9" cy="531.0" r="0.8" fill="#5a5ac8"/>
<path d="M640.9 526.8 L645.3 531.2 M645.3 526.8 L640.9 531.2" stroke="#8282c0" stroke-width="1.5"/>
<circle cx="643.1" cy="529.0" r="0.8" fill="#5a5ac8"/>
<path d="M664.1 524.2 L668.5 528.6 M668.5 524.2 L664.1 528.6" stroke="#8282c0" stroke-width="1.5"/>
<circle cx="666.3" cy="526.4" r="0.8" fill="#5a5ac8"/>
<path d="M687.1 521.8 L691.5 526.2 M691.5 521.8 L687.1 526.2" stroke="#8282c0" stroke-width="1.5"/>
<circle cx="689.3" cy="524.0" r="0.8" fill="#5a5ac8"/>
<path d="M711.2 518.8 L715.6 523.2 M715.6 518.8 L711.2 523.2" stroke="#8282c0" stroke-width="1.5"/>
<circle cx="713.4" cy="521.0" r="0.8" fill="#5a5ac8"/>
<path d="M734.3 516.8 L738.7 521.2 M738.7 516.8 L734.3 521.2" stroke="#8282c0" stroke-width="1.5"/>
<circle cx="736.5" cy="519.0" r="0.8" fill="#5a5ac8"/>
<path d="M758.0 514.0 L762.4 518.4 M762.4 514.0 L758.0 518.4" stroke="#8282c0" stroke-width="1.5"/>
<circle cx="760.2" cy="516.2" r="0.8" fill="#5a5ac8"/>
<path d="M782.2 511.8 L786.6 516.2 M786.6 511.8 L782.2 516.2" stroke="#8282c0" stroke-width="1.5"/>
<circle cx="784.4" cy="514.0" r="0.8" fill="#5a5ac8"/>
<path d="M805.9 509.0 L810.3 513.4 M810.3 509.0 L805.9 513.4" stroke="#8282c0" stroke-width="1.5"/>
<circle cx="808.1" cy="511.2" r="0.8" fill="#5a5ac8"/>
<path d="M829.5 506.2 L833.9 510.6 M833.9 506.2 L829.5 510.6" stroke="#8282c0" stroke-width="1.5"/>
<circle cx="831.7" cy="508.4" r="0.8" fill="#5a5ac8"/>
<path d="M852.6 504.0 L857.0 508.4 M857.0 504.0 L852.6 508.4" stroke="#8282c0" stroke-width="1.5"/>
<circle cx="854.8" cy="506.2" r="0.8" fill="#5a5ac8"/>
<path d="M876.3 501.5 L880.7 505.9 M880.7 501.5 L876.3 505.9" stroke="#8282c0" stroke-width="1.5"/>
<circle cx="878.5" cy="503.7" r="0.8" fill="#5a5ac8"/>
<path d="M899.7 498.4 L904.1 502.8 M904.1 498.4 L899.7 502.8" stroke="#8282c0" stroke-width="1.5"/>
<circle cx="901.9" cy="500.6" r="0.8" fill="#5a5ac8"/>
</svg>
<div class="a" style="left:596.5px;top:584.5px;width:8.2px;height:8.2px;border-radius:50%;background:#fff;border:1px solid #bdbdbd"></div>
<div class="t" style="left:608.6px;top:585px">File Index</div>
<div class="a" style="left:650.3px;top:584.4px;width:8.2px;height:8.2px;border-radius:50%;background:#fff;border:1px solid #bdbdbd"></div>
<div class="a" style="left:652.7px;top:586.8px;width:3.4px;height:3.4px;border-radius:50%;background:#333"></div>
<div class="t" style="left:663px;top:585px">TOF (µs)</div>
<div class="a" style="left:701.5px;top:584.4px;width:8.2px;height:8.2px;border-radius:50%;background:#fff;border:1px solid #bdbdbd"></div>
<div class="t" style="left:713.3px;top:585px">λ (Å)</div>
</body></html>
